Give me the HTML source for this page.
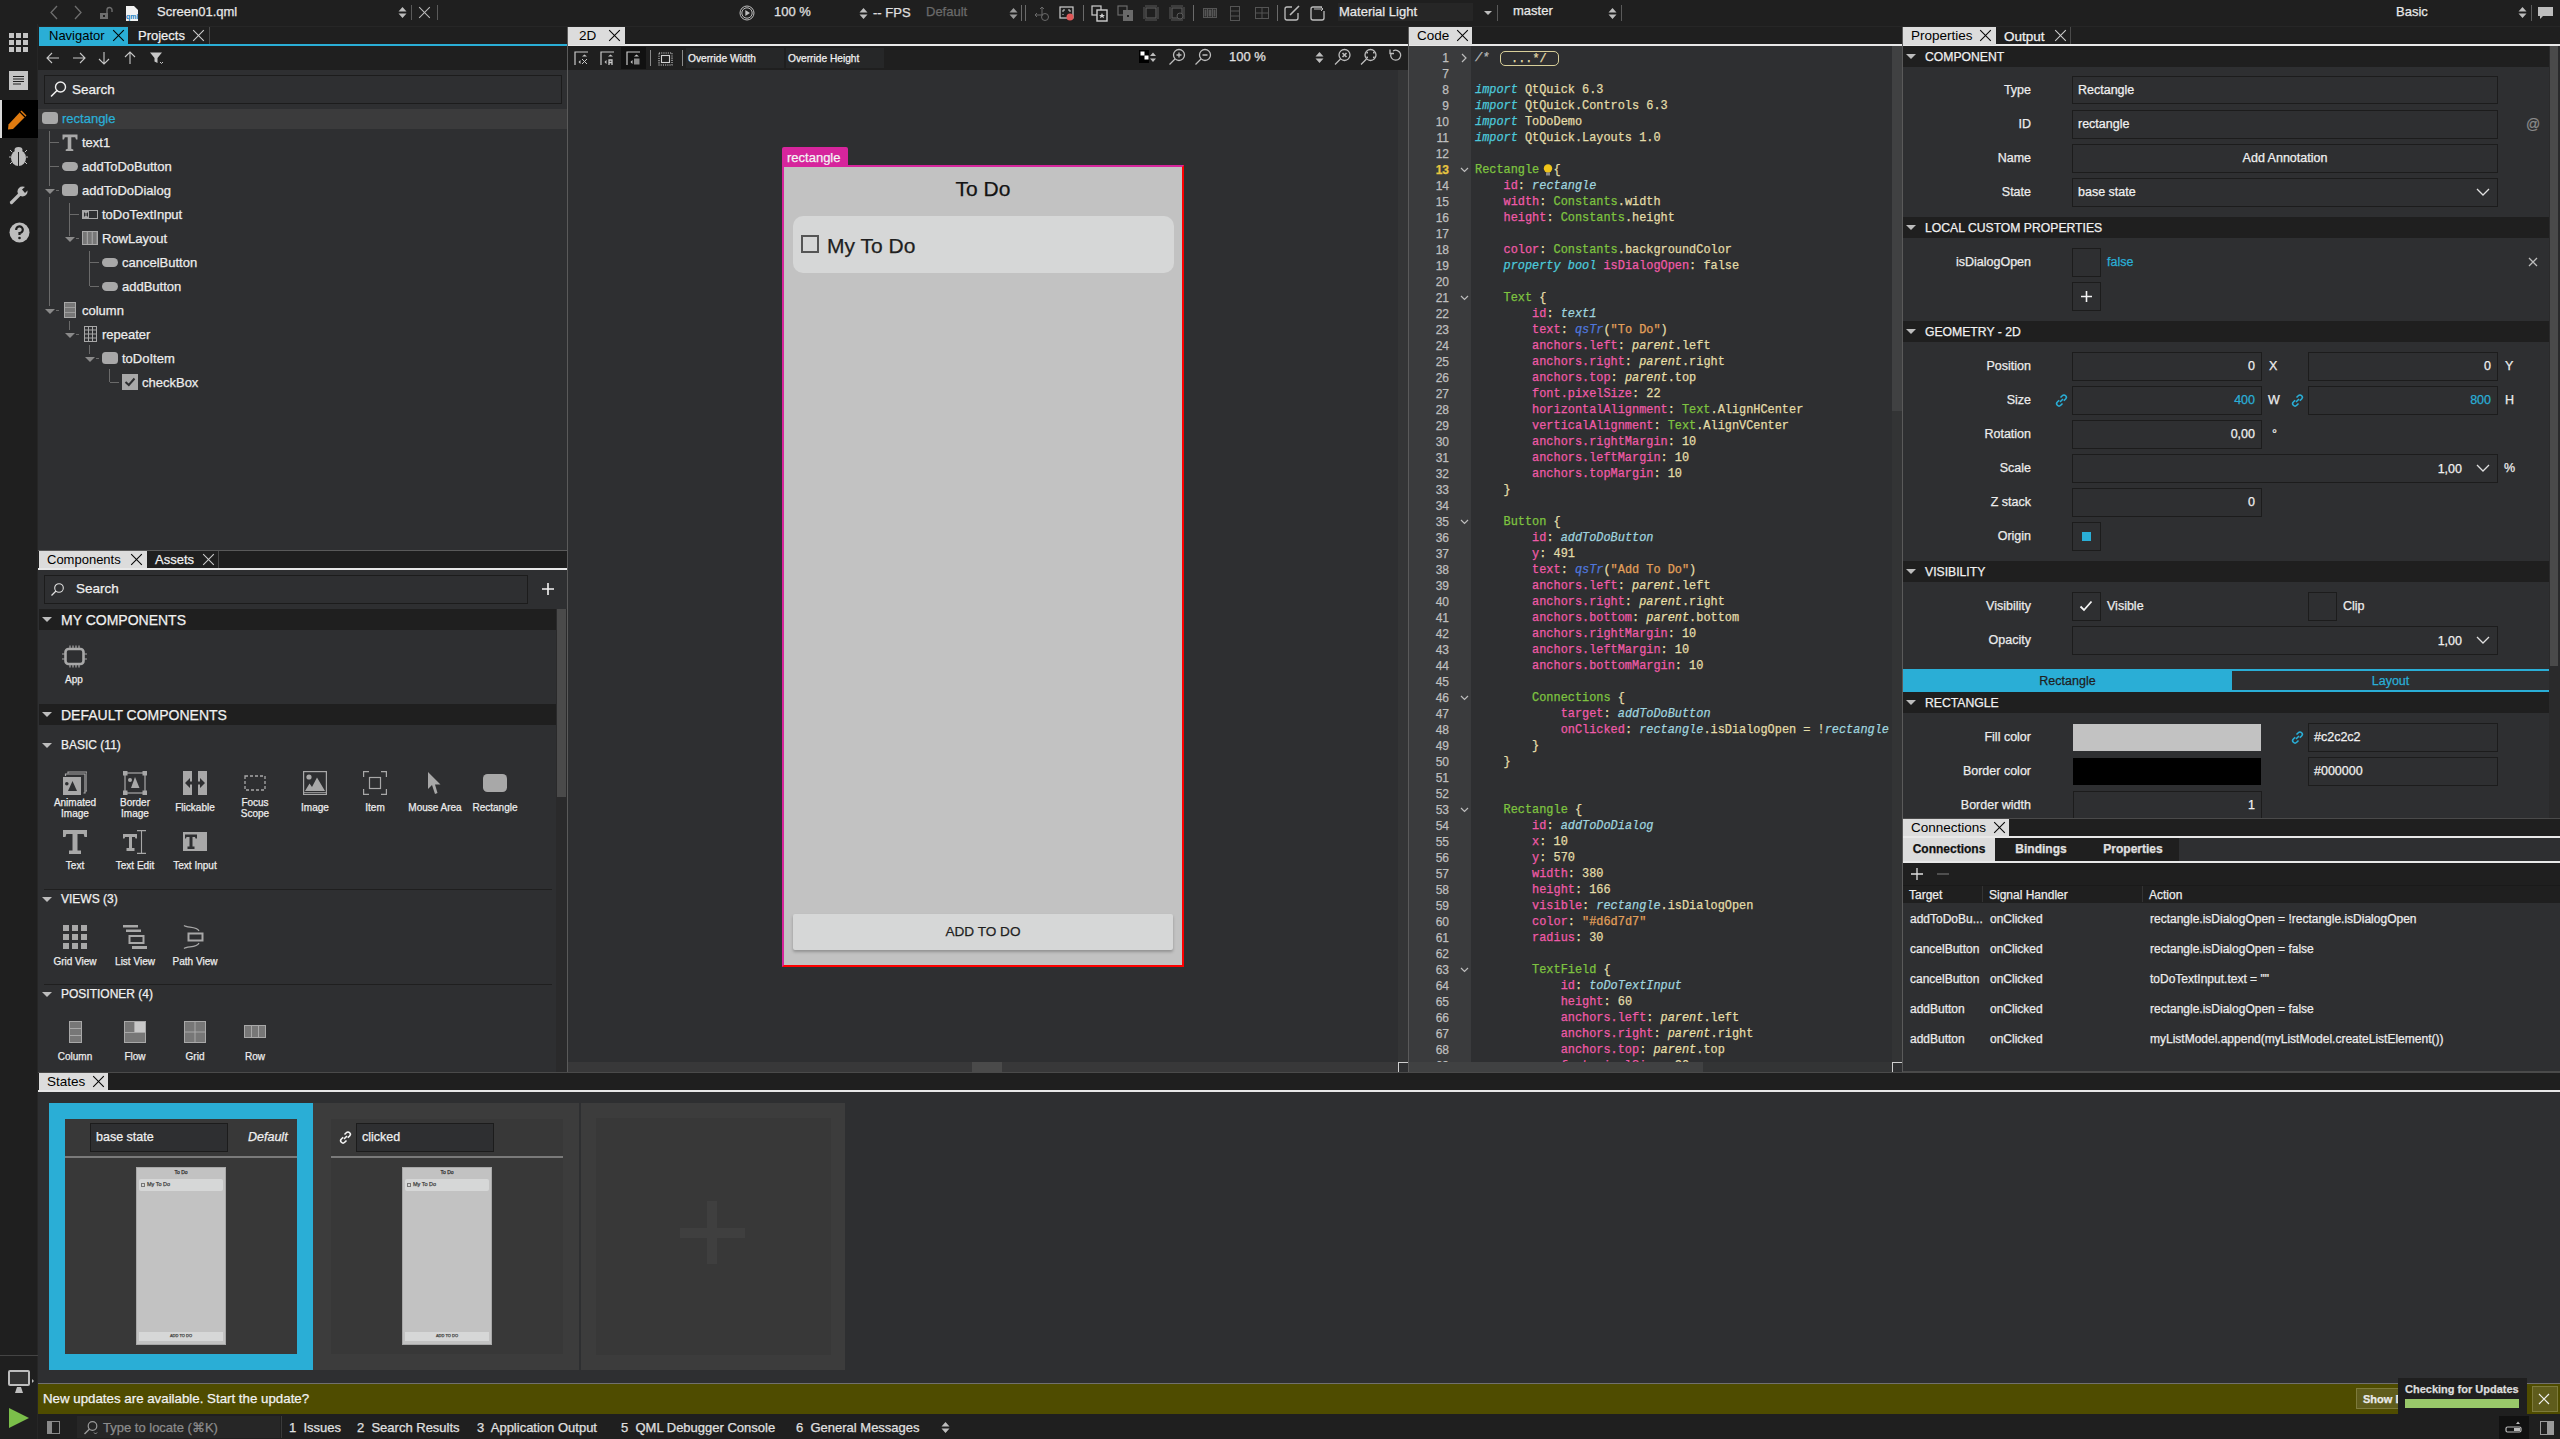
<!DOCTYPE html>
<html><head><meta charset="utf-8">
<style>
*{box-sizing:border-box;margin:0;padding:0}
html,body{width:2560px;height:1439px;overflow:hidden;background:#1f1f1f;font-family:"Liberation Sans",sans-serif;font-size:13px;color:#e6e6e6}
.a{position:absolute}
.t{position:absolute;white-space:pre;line-height:1;-webkit-text-stroke:0.25px currentColor}
.dk{background:#1f1f1f}
.pn{background:#2e2f31}
.tab{position:absolute;height:19px;font-size:13px;line-height:19px;padding-left:9px;color:#f0f0f0}
.tab.on{background:#dcdcdc;color:#000}
.tab.bl{background:#2aaed6;color:#000}
.x{position:absolute;width:11px;height:11px}
.x:before,.x:after{content:"";position:absolute;left:-2px;top:5px;width:15px;height:1px;background:currentColor;transform:rotate(45deg)}
.x:after{transform:rotate(-45deg)}
.inp{position:absolute;border:1px solid #1c1c1c;background:#2e2f31;height:28px}
.lbl{position:absolute;white-space:pre;text-align:right;width:160px;font-size:13px;line-height:14px;color:#e6e6e6}
.hdr{position:absolute;background:#1f1f1f;height:21px;font-size:13px;line-height:21px;color:#f0f0f0}
.tri{position:absolute;width:0;height:0;border-left:5px solid transparent;border-right:5px solid transparent;border-top:5px solid #bdbdbd}
.code{font-family:"Liberation Mono",monospace;font-size:11.9px}
</style></head><body>


<!-- ============ LEFT MODE BAR ============ -->
<div class="a dk" style="left:0;top:24px;width:38px;height:1415px"></div>
<div class="a" style="left:37px;top:24px;width:1px;height:1415px;background:#262626"></div>
<svg class="a" style="left:9px;top:33px" width="20" height="20" viewBox="0 0 20 20" fill="#c4c4c4"><rect x="0" y="0" width="5" height="5"/><rect x="7" y="0" width="5" height="5"/><rect x="14" y="0" width="5" height="5"/><rect x="0" y="7" width="5" height="5"/><rect x="7" y="7" width="5" height="5"/><rect x="14" y="7" width="5" height="5"/><rect x="0" y="14" width="5" height="5"/><rect x="7" y="14" width="5" height="5"/><rect x="14" y="14" width="5" height="5"/></svg>
<svg class="a" style="left:9px;top:71px" width="20" height="20" viewBox="0 0 20 20"><rect x="0" y="0" width="19" height="19" fill="#c4c4c4"/><path d="M4 5.5h11M4 8h11M4 10.5h11M4 13h8" stroke="#1f1f1f" stroke-width="1.2"/></svg>
<div class="a" style="left:0;top:100px;width:38px;height:38px;background:#000"></div>
<div class="a" style="left:0;top:100px;width:2px;height:38px;background:#d8d8d8"></div>
<svg class="a" style="left:7px;top:108px" width="22" height="22" viewBox="0 0 22 22"><path d="M14.5 2.5 L19.5 7.5 L6 21 L1 21.5 L1.5 16.5Z" fill="#e07b10"/><path d="M13 4 L18 9" stroke="#000" stroke-width="1.3"/></svg>
<svg class="a" style="left:8px;top:146px" width="21" height="21" viewBox="0 0 21 21"><ellipse cx="10.5" cy="12" rx="7.5" ry="8" fill="#bdbdbd"/><ellipse cx="10.5" cy="4" rx="4" ry="3" fill="#bdbdbd"/><path d="M10.5 6v14" stroke="#1f1f1f" stroke-width="1"/><path d="M1 11h2M18 11h2M2 4l2 2M19 4l-2 2M2 18l2-2M19 18l-2-2" stroke="#bdbdbd" stroke-width="1"/></svg>
<svg class="a" style="left:9px;top:185px" width="20" height="20" viewBox="0 0 20 20"><path d="M2.5 17.5 L11 9" stroke="#bdbdbd" stroke-width="3.2" stroke-linecap="round"/><circle cx="13.5" cy="6.5" r="5" fill="#bdbdbd"/><path d="M13 4.5 L17 1 L20 4 L16 8Z" fill="#1f1f1f"/></svg>
<svg class="a" style="left:9px;top:222px" width="21" height="21" viewBox="0 0 21 21"><circle cx="10.5" cy="10.5" r="10" fill="#bdbdbd"/><path d="M7.2 8 A3.3 3.3 0 1 1 10.5 11 V13" fill="none" stroke="#1f1f1f" stroke-width="2.2"/><circle cx="10.5" cy="16" r="1.3" fill="#1f1f1f"/></svg>
<div class="a" style="left:0;top:1355px;width:38px;height:1px;background:#444"></div>
<svg class="a" style="left:6px;top:1369px" width="30" height="25" viewBox="0 0 30 25"><rect x="2" y="1" width="22" height="16" rx="2" fill="#bdbdbd"/><rect x="4" y="3" width="18" height="12" fill="#333"/><path d="M9 24 L11 18 H15 L17 24Z" fill="#bdbdbd"/><path d="M26 10 L28 12 L26 14Z" fill="#bdbdbd"/></svg>
<svg class="a" style="left:8px;top:1407px" width="22" height="22" viewBox="0 0 22 22"><path d="M1 1 L21 11 L1 21Z" fill="#7bbf4a"/></svg>

<!-- ============ TOP BAR ============ -->
<div class="a dk" style="left:0;top:0;width:2560px;height:24px"></div>
<div class="a" style="left:38px;top:26px;width:2522px;height:1px;background:#262626"></div>
<svg class="a" style="left:48px;top:5px" width="40" height="15" viewBox="0 0 40 15"><path d="M9 1 L3 7.5 L9 14" fill="none" stroke="#6e6e6e" stroke-width="1.3"/><path d="M27 1 L33 7.5 L27 14" fill="none" stroke="#6e6e6e" stroke-width="1.3"/></svg>
<svg class="a" style="left:99px;top:6px" width="14" height="14" viewBox="0 0 14 14"><rect x="1" y="7" width="8" height="6" fill="#6e6e6e"/><rect x="4" y="9" width="2" height="2" fill="#1f1f1f"/><path d="M8 7 V4 A2.5 2.5 0 0 1 13 4 V6" fill="none" stroke="#6e6e6e" stroke-width="1.4"/></svg>
<svg class="a" style="left:125px;top:5px" width="14" height="17" viewBox="0 0 14 17"><path d="M1 1 H9 L13 5 V16 H1 Z" fill="#f2f2f2"/><text x="1" y="14" font-size="7" font-family="Liberation Sans" fill="#1a7fc2" font-weight="bold">qml</text></svg>
<div class="t" style="left:157px;top:5px;font-size:13px;color:#e8e8e8">Screen01.qml</div>
<svg class="a" style="left:398px;top:6px" width="9" height="13" viewBox="0 0 9 13"><path d="M0.5 5.5 L4.5 1 L8.5 5.5Z M0.5 7.5 L4.5 12 L8.5 7.5Z" fill="#bdbdbd"/></svg>
<div class="a" style="left:411px;top:5px;width:1px;height:15px;background:#5a5a5a"></div>
<div class="x" style="left:419px;top:7px;color:#bdbdbd"></div>
<div class="a" style="left:437px;top:5px;width:1px;height:15px;background:#5a5a5a"></div>

<svg class="a" style="left:739px;top:5px" width="16" height="16" viewBox="0 0 16 16"><circle cx="8" cy="8" r="7" fill="none" stroke="#bdbdbd" stroke-width="1"/><circle cx="8" cy="8" r="5.2" fill="none" stroke="#bdbdbd" stroke-width="1"/><path d="M6.3 5 L11 8 L6.3 11Z" fill="#bdbdbd"/></svg>
<div class="t" style="left:774px;top:5px;font-size:13px;color:#e0e0e0">100 %</div>
<svg class="a" style="left:859px;top:7px" width="9" height="13" viewBox="0 0 9 13"><path d="M0.5 5.5 L4.5 1 L8.5 5.5Z M0.5 7.5 L4.5 12 L8.5 7.5Z" fill="#bdbdbd"/></svg>
<div class="t" style="left:873px;top:6px;font-size:13px;color:#e0e0e0">-- FPS</div>
<div class="t" style="left:926px;top:5px;font-size:13px;color:#6a6a6a">Default</div>
<svg class="a" style="left:1009px;top:7px" width="9" height="13" viewBox="0 0 9 13"><path d="M0.5 5.5 L4.5 1 L8.5 5.5Z M0.5 7.5 L4.5 12 L8.5 7.5Z" fill="#9a9a9a"/></svg>
<div class="a" style="left:1021px;top:5px;width:1px;height:16px;background:#6a6a6a"></div>
<div class="a" style="left:1025px;top:5px;width:1px;height:16px;background:#6a6a6a"></div>
<svg class="a" style="left:1034px;top:6px" width="16" height="15" viewBox="0 0 16 15"><path d="M8 1 V9 M1 9 H9 M6 3 L8 1 L10 3 M3 7 L1 9 L3 11" fill="none" stroke="#6a6a6a" stroke-width="1"/><circle cx="11" cy="11" r="3.5" fill="none" stroke="#6a6a6a"/></svg>
<svg class="a" style="left:1059px;top:6px" width="16" height="15" viewBox="0 0 16 15"><rect x="1" y="1" width="13" height="11" fill="none" stroke="#d0d0d0" stroke-width="1.2"/><path d="M4 4h2M4 4v2M11 4h-2M11 4v2M4 9v-1M11 9v-1" stroke="#d0d0d0"/><circle cx="11" cy="11" r="3.5" fill="#e05858"/></svg>
<div class="a" style="left:1083px;top:5px;width:1px;height:16px;background:#6a6a6a"></div>
<svg class="a" style="left:1091px;top:5px" width="17" height="17" viewBox="0 0 17 17"><rect x="1" y="1" width="9" height="9" fill="none" stroke="#cfcfcf" stroke-width="1.2"/><rect x="6" y="5" width="10" height="11" fill="#1f1f1f" stroke="#cfcfcf" stroke-width="1.4"/><path d="M11 8 l1 2 h2 l-1.6 1.2 l.6 2 l-2-1.2 l-2 1.2 l.6-2 L8 10 h2z" fill="#cfcfcf"/></svg>
<svg class="a" style="left:1117px;top:5px" width="17" height="17" viewBox="0 0 17 17"><rect x="1" y="1" width="9" height="9" fill="none" stroke="#6a6a6a" stroke-width="1.2"/><rect x="6" y="5" width="10" height="11" fill="#6a6a6a"/><rect x="10" y="10" width="2" height="2" fill="#1f1f1f"/></svg>
<svg class="a" style="left:1143px;top:5px" width="16" height="16" viewBox="0 0 16 16"><rect x="3" y="3" width="10" height="10" fill="none" stroke="#5a5a5a" stroke-width="1.2"/><path d="M1 2v12M15 2v12M2 1h12M2 15h12" stroke="#5a5a5a"/></svg>
<svg class="a" style="left:1169px;top:5px" width="16" height="16" viewBox="0 0 16 16"><rect x="3" y="3" width="10" height="10" fill="none" stroke="#5a5a5a" stroke-width="1.2"/><path d="M1 2v12M15 2v12M2 1h12M2 15h12" stroke="#5a5a5a"/><circle cx="11" cy="11" r="3" fill="#1f1f1f" stroke="#5a5a5a"/></svg>
<div class="a" style="left:1193px;top:5px;width:1px;height:16px;background:#6a6a6a"></div>
<svg class="a" style="left:1203px;top:8px" width="14" height="10" viewBox="0 0 14 10"><rect x="0.5" y="0.5" width="13" height="9" fill="none" stroke="#555"/><path d="M4.5 1v8M9.5 1v8" stroke="#555"/><rect x="1.5" y="1.5" width="2" height="7" fill="#555"/><rect x="5.5" y="1.5" width="3" height="7" fill="#555"/><rect x="10.5" y="1.5" width="2" height="7" fill="#555"/></svg>
<svg class="a" style="left:1230px;top:6px" width="10" height="15" viewBox="0 0 10 15"><rect x="0.5" y="0.5" width="9" height="14" fill="none" stroke="#555"/><path d="M1 5h8M1 10h8" stroke="#555"/></svg>
<svg class="a" style="left:1255px;top:7px" width="14" height="12" viewBox="0 0 14 12"><rect x="0.5" y="0.5" width="13" height="11" fill="none" stroke="#555"/><path d="M7 1v10M1 6h12" stroke="#555"/></svg>
<div class="a" style="left:1277px;top:5px;width:1px;height:16px;background:#6a6a6a"></div>
<svg class="a" style="left:1284px;top:5px" width="17" height="16" viewBox="0 0 17 16"><path d="M8 2 H3 A2 2 0 0 0 1 4 V13 A2 2 0 0 0 3 15 H12 A2 2 0 0 0 14 13 V8" fill="none" stroke="#bdbdbd" stroke-width="1.3"/><path d="M6 10 L15 1" stroke="#bdbdbd" stroke-width="1.6"/></svg>
<svg class="a" style="left:1310px;top:5px" width="16" height="16" viewBox="0 0 16 16"><path d="M12 2 H3 A2 2 0 0 0 1 4 V13 A2 2 0 0 0 3 15 H12 A2 2 0 0 0 14 13 V6" fill="none" stroke="#bdbdbd" stroke-width="1.3"/><path d="M4 4 H13 M11 2 L13 4 L11 6" fill="none" stroke="#bdbdbd"/></svg>
<div class="a" style="left:1338px;top:3px;width:135px;height:18px;background:#262626"></div>
<div class="t" style="left:1339px;top:5px;font-size:13px;color:#e8e8e8">Material Light</div>
<svg class="a" style="left:1483px;top:10px" width="10" height="6" viewBox="0 0 10 6"><path d="M1 1 L5 5 L9 1Z" fill="#bdbdbd"/></svg>
<div class="a" style="left:1497px;top:5px;width:1px;height:16px;background:#5a5a5a"></div>
<div class="t" style="left:1513px;top:4px;font-size:13px;color:#e8e8e8">master</div>
<svg class="a" style="left:1608px;top:7px" width="9" height="13" viewBox="0 0 9 13"><path d="M0.5 5.5 L4.5 1 L8.5 5.5Z M0.5 7.5 L4.5 12 L8.5 7.5Z" fill="#bdbdbd"/></svg>
<div class="a" style="left:1621px;top:5px;width:1px;height:16px;background:#5a5a5a"></div>
<div class="t" style="left:2396px;top:5px;font-size:13px;color:#e8e8e8">Basic</div>
<svg class="a" style="left:2518px;top:6px" width="9" height="13" viewBox="0 0 9 13"><path d="M0.5 5.5 L4.5 1 L8.5 5.5Z M0.5 7.5 L4.5 12 L8.5 7.5Z" fill="#bdbdbd"/></svg>
<div class="a" style="left:2531px;top:5px;width:1px;height:16px;background:#5a5a5a"></div>
<svg class="a" style="left:2537px;top:6px" width="17" height="14" viewBox="0 0 17 14"><path d="M1 1 H16 V10 H6 L3 13 V10 H1Z" fill="#bdbdbd"/></svg>

<!-- ============ NAVIGATOR PANEL ============ -->
<div class="a dk" style="left:38px;top:27px;width:529px;height:43px"></div>
<div class="a" style="left:39px;top:44px;width:528px;height:2px;background:#2aaed6"></div>
<div class="tab bl" style="left:39px;top:27px;width:89px;height:18px;line-height:17px;padding-left:10px">Navigator</div>
<div class="x" style="left:113px;top:30px;color:#000"></div>
<div class="t" style="left:138px;top:29px;color:#f0f0f0">Projects</div>
<div class="x" style="left:193px;top:30px;color:#d0d0d0"></div>
<div class="a" style="left:209px;top:27px;width:1px;height:17px;background:#4a4a4a"></div>
<svg class="a" style="left:46px;top:51px" width="120" height="14" viewBox="0 0 120 14" fill="none" stroke="#c8c8c8" stroke-width="1.1"><path d="M1 7h12M6 2L1 7l5 5"/><path d="M27 7h12M34 2l5 5-5 5"/><path d="M58 1v12M53 8l5 5 5-5"/><path d="M84 1v12M79 6l5-5 5 5"/><path d="M104 1.5h12l-4.5 5.5v5l-3-1.5v-3.5z" fill="#c8c8c8" stroke="none"/><path d="M114 11l1.5 1.5 1.5-1.5" stroke-width="1"/></svg>
<div class="a pn" style="left:38px;top:70px;width:529px;height:480px"></div>
<div class="inp" style="left:44px;top:75px;width:518px;height:29px"></div>
<svg class="a" style="left:50px;top:80px" width="18" height="18" viewBox="0 0 18 18"><circle cx="10.5" cy="7" r="5" fill="none" stroke="#f0f0f0" stroke-width="1.4"/><path d="M7 10.5 L1.5 16" stroke="#f0f0f0" stroke-width="1.6" stroke-linecap="round"/></svg>
<div class="t" style="left:72px;top:83px;font-size:13.5px;color:#f0f0f0">Search</div>
<div class="a" style="left:38px;top:109px;width:529px;height:20px;background:#3b3b3c"></div>
<div class="a" style="left:49px;top:131px;width:1px;height:55px;background:#6a6a6a"></div>
<div class="a" style="left:50px;top:142px;width:9px;height:1px;background:#6a6a6a"></div>
<div class="a" style="left:50px;top:166px;width:9px;height:1px;background:#6a6a6a"></div>
<div class="tri" style="left:45px;top:189px;border-top-color:#8a8a8a"></div>
<div class="a" style="left:56px;top:190px;width:3px;height:1px;background:#6a6a6a"></div>
<div class="a" style="left:49px;top:197px;width:1px;height:109px;background:#6a6a6a"></div>
<div class="tri" style="left:45px;top:309px;border-top-color:#8a8a8a"></div>
<div class="a" style="left:56px;top:310px;width:3px;height:1px;background:#6a6a6a"></div>
<div class="a" style="left:69px;top:203px;width:1px;height:33px;background:#6a6a6a"></div>
<div class="a" style="left:70px;top:214px;width:9px;height:1px;background:#6a6a6a"></div>
<div class="tri" style="left:65px;top:237px;border-top-color:#8a8a8a"></div>
<div class="a" style="left:76px;top:238px;width:3px;height:1px;background:#6a6a6a"></div>
<div class="a" style="left:89px;top:251px;width:1px;height:35px;background:#6a6a6a"></div>
<div class="a" style="left:90px;top:262px;width:9px;height:1px;background:#6a6a6a"></div>
<div class="a" style="left:90px;top:286px;width:9px;height:1px;background:#6a6a6a"></div>
<div class="a" style="left:69px;top:321px;width:1px;height:9px;background:#6a6a6a"></div>
<div class="tri" style="left:65px;top:333px;border-top-color:#8a8a8a"></div>
<div class="a" style="left:76px;top:334px;width:3px;height:1px;background:#6a6a6a"></div>
<div class="a" style="left:89px;top:345px;width:1px;height:9px;background:#6a6a6a"></div>
<div class="tri" style="left:85px;top:357px;border-top-color:#8a8a8a"></div>
<div class="a" style="left:96px;top:358px;width:3px;height:1px;background:#6a6a6a"></div>
<div class="a" style="left:109px;top:369px;width:1px;height:13px;background:#6a6a6a"></div>
<div class="a" style="left:110px;top:382px;width:9px;height:1px;background:#6a6a6a"></div>
<div class="a" style="left:42px;top:112px;width:16px;height:12px;line-height:0"><svg width="16" height="12" viewBox="0 0 16 12"><rect x="0" y="0" width="16" height="12" rx="3.5" fill="#a8a8a8"/></svg></div>
<div class="t" style="left:62px;top:112px;font-size:13px;color:#2aaed6">rectangle</div>
<div class="a" style="left:62px;top:134px;width:16px;height:17px;line-height:0"><svg width="16" height="17" viewBox="0 0 16 17"><path d="M0.5 0.5h15v5h-1.5l-.8-2.3h-3.9v11.6l2 .6v1.6h-7.6v-1.6l2-.6V3.2H2.8L2 5.5H.5z" fill="#a8a8a8"/></svg></div>
<div class="t" style="left:82px;top:136px;font-size:13px;color:#ececec">text1</div>
<div class="a" style="left:62px;top:162px;width:16px;height:9px;line-height:0"><svg width="16" height="9" viewBox="0 0 16 9"><rect x="0" y="0" width="16" height="9" rx="4.5" fill="#a8a8a8"/></svg></div>
<div class="t" style="left:82px;top:160px;font-size:13px;color:#ececec">addToDoButton</div>
<div class="a" style="left:62px;top:184px;width:16px;height:12px;line-height:0"><svg width="16" height="12" viewBox="0 0 16 12"><rect x="0" y="0" width="16" height="12" rx="3.5" fill="#a8a8a8"/></svg></div>
<div class="t" style="left:82px;top:184px;font-size:13px;color:#ececec">addToDoDialog</div>
<div class="a" style="left:82px;top:210px;width:16px;height:9px;line-height:0"><svg width="16" height="9" viewBox="0 0 16 9"><rect x="0.5" y="0.5" width="15" height="8" fill="none" stroke="#a8a8a8"/><path d="M2.5 2.5h3M2.5 6.5h3M4 2.5v4" stroke="#a8a8a8"/><rect x="1.5" y="1.5" width="5" height="6" fill="none" stroke="#a8a8a8"/></svg></div>
<div class="t" style="left:102px;top:208px;font-size:13px;color:#ececec">toDoTextInput</div>
<div class="a" style="left:82px;top:231px;width:16px;height:14px;line-height:0"><svg width="16" height="14" viewBox="0 0 16 14"><rect x="0" y="0" width="16" height="14" fill="#a8a8a8"/><path d="M1 1h3.8v12H1zM5.9 1h3.8v12H5.9zM10.8 1h3.8v12h-3.8z" fill="#777"/></svg></div>
<div class="t" style="left:102px;top:232px;font-size:13px;color:#ececec">RowLayout</div>
<div class="a" style="left:102px;top:258px;width:16px;height:9px;line-height:0"><svg width="16" height="9" viewBox="0 0 16 9"><rect x="0" y="0" width="16" height="9" rx="4.5" fill="#a8a8a8"/></svg></div>
<div class="t" style="left:122px;top:256px;font-size:13px;color:#ececec">cancelButton</div>
<div class="a" style="left:102px;top:282px;width:16px;height:9px;line-height:0"><svg width="16" height="9" viewBox="0 0 16 9"><rect x="0" y="0" width="16" height="9" rx="4.5" fill="#a8a8a8"/></svg></div>
<div class="t" style="left:122px;top:280px;font-size:13px;color:#ececec">addButton</div>
<div class="a" style="left:64px;top:302px;width:12px;height:16px;line-height:0"><svg width="12" height="16" viewBox="0 0 12 16"><rect x="0" y="0" width="12" height="16" fill="#a8a8a8"/><path d="M1 1h10v4.2H1zM1 6h10v4H1zM1 10.8h10v4.2H1z" fill="#777"/></svg></div>
<div class="t" style="left:82px;top:304px;font-size:13px;color:#ececec">column</div>
<div class="a" style="left:84px;top:326px;width:13px;height:16px;line-height:0"><svg width="13" height="16" viewBox="0 0 13 16"><rect x="0.5" y="0.5" width="12" height="15" fill="none" stroke="#a8a8a8"/><path d="M4.5 1v14M8.5 1v14M1 4h11M1 8h11M1 12h11" stroke="#a8a8a8"/></svg></div>
<div class="t" style="left:102px;top:328px;font-size:13px;color:#ececec">repeater</div>
<div class="a" style="left:102px;top:352px;width:16px;height:12px;line-height:0"><svg width="16" height="12" viewBox="0 0 16 12"><rect x="0" y="0" width="16" height="12" rx="3.5" fill="#a8a8a8"/></svg></div>
<div class="t" style="left:122px;top:352px;font-size:13px;color:#ececec">toDoItem</div>
<div class="a" style="left:122px;top:374px;width:16px;height:16px;line-height:0"><svg width="16" height="16" viewBox="0 0 16 16"><rect x="0" y="0" width="16" height="16" fill="#a8a8a8"/><path d="M3.5 8 L6.8 11 L12.5 4.5" fill="none" stroke="#2e2f31" stroke-width="2"/></svg></div>
<div class="t" style="left:142px;top:376px;font-size:13px;color:#ececec">checkBox</div>
<!-- ============ COMPONENTS PANEL ============ -->
<div class="a pn" style="left:38px;top:550px;width:529px;height:522px"></div>
<div class="a" style="left:38px;top:550px;width:529px;height:1px;background:#5a5a5a"></div>
<div class="a dk" style="left:38px;top:551px;width:529px;height:17px"></div>
<div class="a" style="left:38px;top:568px;width:529px;height:2px;background:#e8e8e8"></div>
<div class="tab on" style="left:39px;top:551px;width:108px;height:17px;line-height:17px;padding-left:8px">Components</div>
<div class="x" style="left:131px;top:554px;color:#000"></div>
<div class="t" style="left:155px;top:553px;color:#f0f0f0">Assets</div>
<div class="x" style="left:203px;top:554px;color:#d0d0d0"></div>
<div class="a" style="left:218px;top:551px;width:1px;height:17px;background:#4a4a4a"></div>
<div class="inp" style="left:44px;top:575px;width:484px;height:29px"></div>
<svg class="a" style="left:50px;top:582px" width="15" height="15" viewBox="0 0 15 15"><circle cx="9" cy="6" r="4.3" fill="none" stroke="#e0e0e0" stroke-width="1.1"/><path d="M6 9 L1.5 13.5" stroke="#e0e0e0" stroke-width="1.2"/></svg>
<div class="t" style="left:76px;top:582px;font-size:13.5px;color:#f0f0f0">Search</div>
<svg class="a" style="left:542px;top:583px" width="12" height="12" viewBox="0 0 12 12"><path d="M6 0v12M0 6h12" stroke="#f4f4f4" stroke-width="1.6"/></svg>
<div class="a" style="left:556px;top:609px;width:11px;height:463px;background:#2a2a2b"></div>
<div class="a" style="left:557px;top:609px;width:9px;height:188px;background:#4a4a4a"></div>
<div class="hdr" style="left:39px;top:609px;width:517px"></div>
<div class="tri" style="left:42px;top:617px"></div>
<div class="t" style="left:61px;top:613px;font-size:14px;color:#f0f0f0">MY COMPONENTS</div>
<svg class="a" style="left:62px;top:645px" width="25" height="23" viewBox="0 0 25 23"><rect x="3.5" y="4" width="18" height="15" rx="3" fill="none" stroke="#a8a8a8" stroke-width="2.6"/><path d="M8 0.5v3M11 0.5v3M14 0.5v3M17 0.5v3M8 19.5v3M11 19.5v3M14 19.5v3M17 19.5v3M0 9h3M0 14h3M22 9h3M22 14h3" stroke="#a8a8a8" stroke-width="1.2"/></svg>
<div class="t" style="left:65px;top:675px;font-size:10px;color:#ececec">App</div>
<div class="hdr" style="left:39px;top:704px;width:517px"></div>
<div class="tri" style="left:42px;top:712px"></div>
<div class="t" style="left:61px;top:708px;font-size:14px;color:#f0f0f0">DEFAULT COMPONENTS</div>
<div class="tri" style="left:42px;top:743px"></div>
<div class="t" style="left:61px;top:739px;font-size:12px;color:#f0f0f0">BASIC (11)</div>
<div class="a" style="left:44px;top:889px;width:508px;height:1px;background:#1f1f1f"></div>
<div class="tri" style="left:42px;top:897px"></div>
<div class="t" style="left:61px;top:893px;font-size:12px;color:#f0f0f0">VIEWS (3)</div>
<div class="a" style="left:44px;top:984px;width:508px;height:1px;background:#1f1f1f"></div>
<div class="tri" style="left:42px;top:992px"></div>
<div class="t" style="left:61px;top:988px;font-size:12px;color:#f0f0f0">POSITIONER (4)</div>
<div class="a" style="left:63px;top:771px;width:24px;height:24px;line-height:0"><svg width="24" height="24" viewBox="0 0 24 24"><path d="M5 2.5 V1 H24 V20 H22.5" fill="none" stroke="#a8a8a8" stroke-width="1.2"/><path d="M2.5 5 V3 H22 V22 H20.5" fill="none" stroke="#a8a8a8" stroke-width="1.2"/><rect x="0" y="6" width="18" height="18" fill="#a8a8a8"/><path d="M5 20 L9.5 10 L14 20Z" fill="#2e2f31"/><circle cx="3.8" cy="12.8" r="1.8" fill="#2e2f31"/></svg></div>
<div class="t" style="left:35px;top:797px;width:80px;text-align:center;font-size:10px;line-height:11px;color:#ececec">Animated<br>Image</div>
<div class="a" style="left:123px;top:771px;width:24px;height:24px;line-height:0"><svg width="24" height="24" viewBox="0 0 24 24"><rect x="2" y="2" width="20" height="20" fill="none" stroke="#a8a8a8" stroke-width="1.2"/><rect x="0" y="0" width="4.5" height="4.5" fill="#a8a8a8"/><rect x="19.5" y="0" width="4.5" height="4.5" fill="#a8a8a8"/><rect x="0" y="19.5" width="4.5" height="4.5" fill="#a8a8a8"/><rect x="19.5" y="19.5" width="4.5" height="4.5" fill="#a8a8a8"/><path d="M8 17 L12 6 L16.5 17Z" fill="#a8a8a8"/><circle cx="7" cy="9" r="2" fill="#a8a8a8"/></svg></div>
<div class="t" style="left:95px;top:797px;width:80px;text-align:center;font-size:10px;line-height:11px;color:#ececec">Border<br>Image</div>
<div class="a" style="left:183px;top:771px;width:24px;height:24px;line-height:0"><svg width="24" height="24" viewBox="0 0 24 24"><rect x="0" y="0" width="9" height="24" fill="#a8a8a8"/><rect x="15" y="0" width="9" height="24" fill="#a8a8a8"/><path d="M2 12 L7 7 V10.5 H11 V13.5 H7 V17Z M22 12 L17 7 V10.5 H13 V13.5 H17 V17Z" fill="#2e2f31"/></svg></div>
<div class="t" style="left:155px;top:802px;width:80px;text-align:center;font-size:10px;line-height:11px;color:#ececec">Flickable</div>
<div class="a" style="left:243px;top:771px;width:24px;height:24px;line-height:0"><svg width="24" height="24" viewBox="0 0 24 24"><rect x="2" y="5" width="20" height="14" fill="none" stroke="#a8a8a8" stroke-width="1.3" stroke-dasharray="3 2"/></svg></div>
<div class="t" style="left:215px;top:797px;width:80px;text-align:center;font-size:10px;line-height:11px;color:#ececec">Focus<br>Scope</div>
<div class="a" style="left:303px;top:771px;width:24px;height:24px;line-height:0"><svg width="24" height="24" viewBox="0 0 24 24"><rect x="0.6" y="0.6" width="22.8" height="22.8" fill="none" stroke="#a8a8a8" stroke-width="1.2"/><path d="M2 20 L6.5 12.5 L9 16 L14 6.5 L22 20Z" fill="#a8a8a8"/><circle cx="6" cy="6" r="2.6" fill="#a8a8a8"/><path d="M1 21.5h22" stroke="#a8a8a8" stroke-width="0.8"/></svg></div>
<div class="t" style="left:275px;top:802px;width:80px;text-align:center;font-size:10px;line-height:11px;color:#ececec">Image</div>
<div class="a" style="left:363px;top:771px;width:24px;height:24px;line-height:0"><svg width="24" height="24" viewBox="0 0 24 24" fill="none" stroke="#a8a8a8" stroke-width="1.2"><path d="M0.6 6V0.6H6M18 0.6h5.4V6M23.4 18v5.4H18M6 23.4H0.6V18"/><rect x="6.5" y="6.5" width="11" height="11"/></svg></div>
<div class="t" style="left:335px;top:802px;width:80px;text-align:center;font-size:10px;line-height:11px;color:#ececec">Item</div>
<div class="a" style="left:427px;top:771px;width:14px;height:24px;line-height:0"><svg width="14" height="24" viewBox="0 0 14 24"><path d="M1 1 L1 18 L5 14 L8 23 L10.5 22 L8 13.5 L13.5 13.5Z" fill="#a8a8a8"/></svg></div>
<div class="t" style="left:395px;top:802px;width:80px;text-align:center;font-size:10px;line-height:11px;color:#ececec">Mouse Area</div>
<div class="a" style="left:483px;top:774px;width:24px;height:18px;line-height:0"><svg width="24" height="18" viewBox="0 0 24 18"><rect x="0" y="0" width="24" height="18" rx="4.5" fill="#a8a8a8"/></svg></div>
<div class="t" style="left:455px;top:802px;width:80px;text-align:center;font-size:10px;line-height:11px;color:#ececec">Rectangle</div>
<div class="a" style="left:63px;top:830px;width:24px;height:24px;line-height:0"><svg width="24" height="24" viewBox="0 0 24 24"><path d="M0 0h24v7h-2.5l-.8-3h-6.2v16.5h3.5V24h-12v-3.5h3.5V4H3.3l-.8 3H0z" fill="#a8a8a8"/></svg></div>
<div class="t" style="left:35px;top:860px;width:80px;text-align:center;font-size:10px;line-height:11px;color:#ececec">Text</div>
<div class="a" style="left:123px;top:830px;width:24px;height:24px;line-height:0"><svg width="24" height="24" viewBox="0 0 24 24"><path d="M0 4h14v4.5h-1.5l-.6-1.5H9v11h2.5V21h-8v-3H6V7H2.1l-.6 1.5H0z" fill="#a8a8a8"/><path d="M14 0.6h9M14 23.4h9M18.5 1v22" stroke="#a8a8a8" stroke-width="1.1"/></svg></div>
<div class="t" style="left:95px;top:860px;width:80px;text-align:center;font-size:10px;line-height:11px;color:#ececec">Text Edit</div>
<div class="a" style="left:183px;top:832px;width:24px;height:19px;line-height:0"><svg width="24" height="19" viewBox="0 0 24 19"><rect x="0" y="0" width="24" height="19" fill="#a8a8a8"/><path d="M2 2.5h12v4h-1.5l-.5-1.5H9.5v9.5h2V17h-7v-2.5h2V5H3.5l-.5 1.5H2z" fill="#2e2f31"/></svg></div>
<div class="t" style="left:155px;top:860px;width:80px;text-align:center;font-size:10px;line-height:11px;color:#ececec">Text Input</div>
<div class="a" style="left:63px;top:925px;width:24px;height:24px;line-height:0"><svg width="24" height="24" viewBox="0 0 24 24" fill="#a8a8a8"><rect x="0" y="0" width="6" height="6"/><rect x="9" y="0" width="6" height="6"/><rect x="18" y="0" width="6" height="6"/><rect x="0" y="9" width="6" height="6"/><rect x="9" y="9" width="6" height="6"/><rect x="18" y="9" width="6" height="6"/><rect x="0" y="18" width="6" height="6"/><rect x="9" y="18" width="6" height="6"/><rect x="18" y="18" width="6" height="6"/></svg></div>
<div class="t" style="left:35px;top:956px;width:80px;text-align:center;font-size:10px;line-height:11px;color:#ececec">Grid View</div>
<div class="a" style="left:123px;top:925px;width:24px;height:24px;line-height:0"><svg width="24" height="24" viewBox="0 0 24 24"><rect x="0" y="0" width="15" height="2.5" fill="#a8a8a8"/><rect x="3" y="4.5" width="15" height="2.5" fill="#a8a8a8"/><rect x="6.5" y="11" width="14" height="7" fill="none" stroke="#a8a8a8" stroke-width="2"/><rect x="9" y="21" width="15" height="3" fill="#a8a8a8"/></svg></div>
<div class="t" style="left:95px;top:956px;width:80px;text-align:center;font-size:10px;line-height:11px;color:#ececec">List View</div>
<div class="a" style="left:183px;top:925px;width:24px;height:24px;line-height:0"><svg width="24" height="24" viewBox="0 0 24 24"><path d="M1 0.5 C4 3 14 1 16 6 M1 23.5 C4 21 14 23 16 18" fill="none" stroke="#a8a8a8" stroke-width="1.2"/><rect x="5.5" y="8.5" width="14" height="7" fill="none" stroke="#a8a8a8" stroke-width="2"/></svg></div>
<div class="t" style="left:155px;top:956px;width:80px;text-align:center;font-size:10px;line-height:11px;color:#ececec">Path View</div>
<div class="a" style="left:69px;top:1021px;width:13px;height:22px;line-height:0"><svg width="13" height="22" viewBox="0 0 13 22"><rect x="0" y="0" width="13" height="22" fill="#a8a8a8"/><path d="M1 1h11v6H1zM1 8h11v6H1zM1 15h11v6H1z" fill="#777"/></svg></div>
<div class="t" style="left:35px;top:1051px;width:80px;text-align:center;font-size:10px;line-height:11px;color:#ececec">Column</div>
<div class="a" style="left:124px;top:1021px;width:22px;height:22px;line-height:0"><svg width="22" height="22" viewBox="0 0 22 22"><rect x="0" y="0" width="22" height="22" fill="#a8a8a8"/><rect x="1" y="1" width="9" height="10" fill="#777"/><rect x="11" y="1" width="10" height="10" fill="#c8c8c8"/><rect x="1" y="12" width="20" height="9" fill="#777"/></svg></div>
<div class="t" style="left:95px;top:1051px;width:80px;text-align:center;font-size:10px;line-height:11px;color:#ececec">Flow</div>
<div class="a" style="left:184px;top:1021px;width:22px;height:22px;line-height:0"><svg width="22" height="22" viewBox="0 0 22 22"><rect x="0" y="0" width="22" height="22" fill="#a8a8a8"/><path d="M1 1h9.5v9.5H1zM11.5 1H21v9.5h-9.5zM1 11.5h9.5V21H1zM11.5 11.5H21V21h-9.5z" fill="#777"/></svg></div>
<div class="t" style="left:155px;top:1051px;width:80px;text-align:center;font-size:10px;line-height:11px;color:#ececec">Grid</div>
<div class="a" style="left:244px;top:1025px;width:22px;height:13px;line-height:0"><svg width="22" height="13" viewBox="0 0 22 13"><rect x="0" y="0" width="22" height="13" fill="#a8a8a8"/><path d="M1 1h6v11H1zM8 1h6v11H8zM15 1h6v11h-6z" fill="#777"/></svg></div>
<div class="t" style="left:215px;top:1051px;width:80px;text-align:center;font-size:10px;line-height:11px;color:#ececec">Row</div>

<!-- ============ 2D VIEW ============ -->
<div class="a dk" style="left:568px;top:27px;width:841px;height:43px"></div>
<div class="a" style="left:567px;top:27px;width:1px;height:1045px;background:#5a5a5a"></div>
<div class="a" style="left:568px;top:44px;width:841px;height:2px;background:#e8e8e8"></div>
<div class="tab on" style="left:568px;top:27px;width:57px;height:18px;line-height:18px;padding-left:11px;font-size:13.5px">2D</div>
<div class="x" style="left:609px;top:30px;color:#000"></div>
<svg class="a" style="left:574px;top:51px" width="70" height="15" viewBox="0 0 70 15" fill="none" stroke="#c8c8c8" stroke-width="1.2"><path d="M1 14V1h13M27 14V1h13M53 14V1h13"/><path d="M8 5.5l2.5-2 2.5 2z M34 5.5l2.5-2 2.5 2z M60 5.5l2.5-2 2.5 2z" fill="#c8c8c8" stroke="none"/><path d="M4.5 11l2-2v4z M30.5 11l2-2v4z M56.5 11l2-2v4z" fill="#c8c8c8" stroke="none"/><path d="M8 8l5 5M13 8l-5 5" stroke-width="1"/><path d="M35 14V9h3v5M35 11.5h3" stroke-width="1.3"/><rect x="60" y="7.5" width="5.5" height="6" fill="#8a8a8a" stroke="none"/></svg>
<div class="a" style="left:621px;top:47px;width:25px;height:22px;background:#111"></div>
<svg class="a" style="left:626px;top:51px" width="16" height="15" viewBox="0 0 16 15" fill="none" stroke="#c8c8c8" stroke-width="1.2"><path d="M1 14V1h13"/><path d="M8 5.5l2.5-2 2.5 2z" fill="#c8c8c8" stroke="none"/><path d="M4.5 11l2-2v4z" fill="#c8c8c8" stroke="none"/><rect x="8" y="7.5" width="5.5" height="6" fill="#8a8a8a" stroke="none"/></svg>
<div class="a" style="left:650px;top:50px;width:1px;height:16px;background:#8a8a8a"></div>
<svg class="a" style="left:658px;top:52px" width="15" height="14" viewBox="0 0 15 14"><rect x="1" y="1" width="13" height="12" fill="none" stroke="#d0d0d0" stroke-width="1.1" stroke-dasharray="1.1 1.1"/><rect x="3.5" y="3.5" width="8" height="7" fill="none" stroke="#d0d0d0" stroke-width="1.1"/></svg>
<div class="a" style="left:682px;top:50px;width:1px;height:16px;background:#8a8a8a"></div>
<div class="a" style="left:686px;top:48px;width:98px;height:20px;background:#262728"></div>
<div class="t" style="left:688px;top:54px;font-size:10.2px;color:#f0f0f0">Override Width</div>
<div class="a" style="left:786px;top:48px;width:98px;height:20px;background:#262728"></div>
<div class="t" style="left:788px;top:54px;font-size:10.2px;color:#f0f0f0">Override Height</div>
<svg class="a" style="left:1139px;top:50px" width="20" height="15" viewBox="0 0 20 15"><rect x="0" y="0" width="10" height="13" fill="#000"/><rect x="1.5" y="1.5" width="4" height="4" fill="#fff"/><rect x="5.5" y="5.5" width="4" height="4" fill="#fff"/><path d="M11 6l3-3.5 3 3.5z M11 8.5l3 3.5 3-3.5z" fill="#bdbdbd"/></svg>
<svg class="a" style="left:1168px;top:48px" width="44" height="18" viewBox="0 0 44 18" fill="none" stroke="#bdbdbd" stroke-width="1.3"><circle cx="11" cy="7" r="5.5"/><path d="M7 11l-5.5 5.5M8.5 7h5M11 4.5v5"/><circle cx="37" cy="7" r="5.5"/><path d="M33 11l-5.5 5.5M34.5 7h5"/></svg>
<div class="t" style="left:1229px;top:50px;font-size:13px;color:#e0e0e0">100 %</div>
<svg class="a" style="left:1315px;top:51px" width="9" height="13" viewBox="0 0 9 13"><path d="M0.5 5.5 L4.5 1 L8.5 5.5Z M0.5 7.5 L4.5 12 L8.5 7.5Z" fill="#bdbdbd"/></svg>
<svg class="a" style="left:1334px;top:48px" width="70" height="18" viewBox="0 0 70 18" fill="none" stroke="#bdbdbd" stroke-width="1.3"><circle cx="10.5" cy="7" r="5.5"/><path d="M6.5 11l-5.5 5.5"/><path d="M8.5 5l4 4M12.5 5l-4 4" stroke-width="1.6"/><circle cx="36.5" cy="7" r="5.5"/><path d="M32.5 11l-5.5 5.5M34 4.5h-1v1M39 4.5h1v1M34 9.5h-1v-1M39 9.5h1v-1"/><path d="M57 5.5a5 5 0 1 0 2-2.5" /><path d="M56 1.5v4h4" /></svg>
<div class="a pn" style="left:568px;top:70px;width:830px;height:992px"></div>
<div class="a" style="left:1398px;top:70px;width:10px;height:992px;background:#343536"></div>
<div class="a" style="left:568px;top:1062px;width:830px;height:10px;background:#383839"></div>
<div class="a" style="left:972px;top:1062px;width:30px;height:10px;background:#4a4a4a"></div>
<div class="a" style="left:1398px;top:1062px;width:10px;height:10px;background:#2e2f31;border:1px solid #cfcfcf;border-right:none;border-bottom:none"></div>
<div class="a" style="left:1408px;top:27px;width:1px;height:1045px;background:#5a5a5a"></div>

<div class="a" style="left:782px;top:147px;width:66px;height:20px;background:#d6259c;border-radius:2px 2px 0 0"></div>
<div class="t" style="left:787px;top:151px;font-size:13px;color:#f4f4f4">rectangle</div>
<div class="a" style="left:782px;top:165px;width:402px;height:802px;background:#c2c2c2;border-left:2px solid #d6259c;border-top:2px solid #d6259c;border-right:2px solid #ff0000;border-bottom:2px solid #ff0000"></div>
<div class="t" style="left:784px;top:178px;width:398px;text-align:center;font-size:21px;color:#141414">To Do</div>
<div class="a" style="left:793px;top:216px;width:381px;height:57px;background:#d6d7d7;border-radius:10px"></div>
<div class="a" style="left:801px;top:235px;width:18px;height:18px;border:2px solid #555"></div>
<div class="t" style="left:827px;top:235px;font-size:21px;color:#1f1f1f">My To Do</div>
<div class="a" style="left:793px;top:914px;width:380px;height:36px;background:#d6d7d7;border-radius:2px;box-shadow:0 2px 3px rgba(0,0,0,0.25)"></div>
<div class="t" style="left:793px;top:925px;width:380px;text-align:center;font-size:13.6px;color:#1f1f1f">ADD TO DO</div>

<!-- ============ CODE ============ -->
<div class="a dk" style="left:1409px;top:27px;width:494px;height:19px"></div>
<div class="a" style="left:1409px;top:44px;width:494px;height:2px;background:#e8e8e8"></div>
<div class="tab on" style="left:1409px;top:27px;width:63px;height:18px;line-height:18px;padding-left:8px;font-size:13.5px">Code</div>
<div class="x" style="left:1457px;top:30px;color:#000"></div>
<div class="a pn" style="left:1409px;top:46px;width:494px;height:1026px"></div>
<div class="a" style="left:1409px;top:46px;width:62px;height:1016px;background:#3a3b3d"></div>
<div class="a" style="left:1892px;top:46px;width:10px;height:1016px;background:#333435"></div>
<div class="a" style="left:1892px;top:46px;width:10px;height:365px;background:#404142"></div>
<div class="a" style="left:1409px;top:1062px;width:483px;height:10px;background:#333435"></div>
<div class="a" style="left:1409px;top:1062px;width:294px;height:10px;background:#404142"></div>
<div class="a" style="left:1892px;top:1062px;width:10px;height:10px;border:1px solid #cfcfcf;border-right:none;border-bottom:none"></div>
<div class="a" style="left:1902px;top:27px;width:1px;height:1045px;background:#5a5a5a"></div>
<div class="a" style="left:1409px;top:46px;width:483px;height:1016px;overflow:hidden">

<div class="t code" style="left:0px;top:3.5px;width:40px;text-align:right;line-height:16px;color:#bfbfbf;font-weight:normal;font-size:12px;font-family:'Liberation Sans'">1</div>
<svg class="a" style="left:52px;top:6.5px" width="6" height="10" viewBox="0 0 6 10"><path d="M1 1l4 4-4 4" fill="none" stroke="#bdbdbd" stroke-width="1.2"/></svg>
<div class="t code" style="left:66px;top:3.5px;line-height:16px;color:#e3dca8"><span style="color:#bdbdbd;font-style:italic">/*</span></div>
<div class="a" style="left:91px;top:4.5px;width:59px;height:15px;border:1px solid #d8cf9a;border-radius:5px"></div>
<div class="t code" style="left:102px;top:4.5px;line-height:16px;color:#e3dca8">...*/</div>
<div class="t code" style="left:0px;top:19.5px;width:40px;text-align:right;line-height:16px;color:#bfbfbf;font-weight:normal;font-size:12px;font-family:'Liberation Sans'">7</div>
<div class="t code" style="left:66px;top:19.5px;line-height:16px"></div>
<div class="t code" style="left:0px;top:35.5px;width:40px;text-align:right;line-height:16px;color:#bfbfbf;font-weight:normal;font-size:12px;font-family:'Liberation Sans'">8</div>
<div class="t code" style="left:66px;top:35.5px;line-height:16px"><span style="color:#4cc8da;font-style:italic">import</span><span style="color:#e3dca8"> QtQuick 6.3</span></div>
<div class="t code" style="left:0px;top:51.5px;width:40px;text-align:right;line-height:16px;color:#bfbfbf;font-weight:normal;font-size:12px;font-family:'Liberation Sans'">9</div>
<div class="t code" style="left:66px;top:51.5px;line-height:16px"><span style="color:#4cc8da;font-style:italic">import</span><span style="color:#e3dca8"> QtQuick.Controls 6.3</span></div>
<div class="t code" style="left:0px;top:67.5px;width:40px;text-align:right;line-height:16px;color:#bfbfbf;font-weight:normal;font-size:12px;font-family:'Liberation Sans'">10</div>
<div class="t code" style="left:66px;top:67.5px;line-height:16px"><span style="color:#4cc8da;font-style:italic">import</span><span style="color:#e3dca8"> ToDoDemo</span></div>
<div class="t code" style="left:0px;top:83.5px;width:40px;text-align:right;line-height:16px;color:#bfbfbf;font-weight:normal;font-size:12px;font-family:'Liberation Sans'">11</div>
<div class="t code" style="left:66px;top:83.5px;line-height:16px"><span style="color:#4cc8da;font-style:italic">import</span><span style="color:#e3dca8"> QtQuick.Layouts 1.0</span></div>
<div class="t code" style="left:0px;top:99.5px;width:40px;text-align:right;line-height:16px;color:#bfbfbf;font-weight:normal;font-size:12px;font-family:'Liberation Sans'">12</div>
<div class="t code" style="left:66px;top:99.5px;line-height:16px"></div>
<div class="t code" style="left:0px;top:115.5px;width:40px;text-align:right;line-height:16px;color:#e6c440;font-weight:bold;font-size:12px;font-family:'Liberation Sans'">13</div>
<svg class="a" style="left:51px;top:120.5px" width="9" height="6" viewBox="0 0 9 6"><path d="M1 1l3.5 3.5L8 1" fill="none" stroke="#bdbdbd" stroke-width="1.2"/></svg>
<div class="t code" style="left:66px;top:115.5px;line-height:16px"><span style="color:#7ec340">Rectangle</span><span style="color:#e3dca8">  {</span></div>
<svg class="a" style="left:134px;top:117.5px" width="10" height="12" viewBox="0 0 10 12"><circle cx="5" cy="4.5" r="4.2" fill="#f0c419"/><rect x="3" y="8.5" width="4" height="3" fill="#8a8a8a"/></svg>
<div class="t code" style="left:0px;top:131.5px;width:40px;text-align:right;line-height:16px;color:#bfbfbf;font-weight:normal;font-size:12px;font-family:'Liberation Sans'">14</div>
<div class="t code" style="left:66px;top:131.5px;line-height:16px"><span style="color:#e3dca8">    </span><span style="color:#ef5aa8">id</span><span style="color:#e3dca8">: </span><span style="color:#9fd3df;font-style:italic">rectangle</span></div>
<div class="t code" style="left:0px;top:147.5px;width:40px;text-align:right;line-height:16px;color:#bfbfbf;font-weight:normal;font-size:12px;font-family:'Liberation Sans'">15</div>
<div class="t code" style="left:66px;top:147.5px;line-height:16px"><span style="color:#e3dca8">    </span><span style="color:#ef5aa8">width</span><span style="color:#e3dca8">: </span><span style="color:#7ec340">Constants</span><span style="color:#e3dca8">.width</span></div>
<div class="t code" style="left:0px;top:163.5px;width:40px;text-align:right;line-height:16px;color:#bfbfbf;font-weight:normal;font-size:12px;font-family:'Liberation Sans'">16</div>
<div class="t code" style="left:66px;top:163.5px;line-height:16px"><span style="color:#e3dca8">    </span><span style="color:#ef5aa8">height</span><span style="color:#e3dca8">: </span><span style="color:#7ec340">Constants</span><span style="color:#e3dca8">.height</span></div>
<div class="t code" style="left:0px;top:179.5px;width:40px;text-align:right;line-height:16px;color:#bfbfbf;font-weight:normal;font-size:12px;font-family:'Liberation Sans'">17</div>
<div class="t code" style="left:66px;top:179.5px;line-height:16px"></div>
<div class="t code" style="left:0px;top:195.5px;width:40px;text-align:right;line-height:16px;color:#bfbfbf;font-weight:normal;font-size:12px;font-family:'Liberation Sans'">18</div>
<div class="t code" style="left:66px;top:195.5px;line-height:16px"><span style="color:#e3dca8">    </span><span style="color:#ef5aa8">color</span><span style="color:#e3dca8">: </span><span style="color:#7ec340">Constants</span><span style="color:#e3dca8">.backgroundColor</span></div>
<div class="t code" style="left:0px;top:211.5px;width:40px;text-align:right;line-height:16px;color:#bfbfbf;font-weight:normal;font-size:12px;font-family:'Liberation Sans'">19</div>
<div class="t code" style="left:66px;top:211.5px;line-height:16px"><span style="color:#e3dca8">    </span><span style="color:#4cc8da;font-style:italic">property</span><span style="color:#e3dca8"> </span><span style="color:#4cc8da;font-style:italic">bool</span><span style="color:#e3dca8"> </span><span style="color:#ef5aa8">isDialogOpen</span><span style="color:#e3dca8">: </span><span style="color:#e3dca8">false</span></div>
<div class="t code" style="left:0px;top:227.5px;width:40px;text-align:right;line-height:16px;color:#bfbfbf;font-weight:normal;font-size:12px;font-family:'Liberation Sans'">20</div>
<div class="t code" style="left:66px;top:227.5px;line-height:16px"></div>
<div class="t code" style="left:0px;top:243.5px;width:40px;text-align:right;line-height:16px;color:#bfbfbf;font-weight:normal;font-size:12px;font-family:'Liberation Sans'">21</div>
<svg class="a" style="left:51px;top:248.5px" width="9" height="6" viewBox="0 0 9 6"><path d="M1 1l3.5 3.5L8 1" fill="none" stroke="#bdbdbd" stroke-width="1.2"/></svg>
<div class="t code" style="left:66px;top:243.5px;line-height:16px"><span style="color:#e3dca8">    </span><span style="color:#7ec340">Text</span><span style="color:#e3dca8"> {</span></div>
<div class="t code" style="left:0px;top:259.5px;width:40px;text-align:right;line-height:16px;color:#bfbfbf;font-weight:normal;font-size:12px;font-family:'Liberation Sans'">22</div>
<div class="t code" style="left:66px;top:259.5px;line-height:16px"><span style="color:#e3dca8">        </span><span style="color:#ef5aa8">id</span><span style="color:#e3dca8">: </span><span style="color:#9fd3df;font-style:italic">text1</span></div>
<div class="t code" style="left:0px;top:275.5px;width:40px;text-align:right;line-height:16px;color:#bfbfbf;font-weight:normal;font-size:12px;font-family:'Liberation Sans'">23</div>
<div class="t code" style="left:66px;top:275.5px;line-height:16px"><span style="color:#e3dca8">        </span><span style="color:#ef5aa8">text</span><span style="color:#e3dca8">: </span><span style="color:#4f76dc;font-style:italic">qsTr</span><span style="color:#e3dca8">(</span><span style="color:#e3a05a">&quot;To Do&quot;</span><span style="color:#e3dca8">)</span></div>
<div class="t code" style="left:0px;top:291.5px;width:40px;text-align:right;line-height:16px;color:#bfbfbf;font-weight:normal;font-size:12px;font-family:'Liberation Sans'">24</div>
<div class="t code" style="left:66px;top:291.5px;line-height:16px"><span style="color:#e3dca8">        </span><span style="color:#ef5aa8">anchors.left</span><span style="color:#e3dca8">: </span><span style="color:#e6dfa6;font-style:italic">parent</span><span style="color:#e3dca8">.left</span></div>
<div class="t code" style="left:0px;top:307.5px;width:40px;text-align:right;line-height:16px;color:#bfbfbf;font-weight:normal;font-size:12px;font-family:'Liberation Sans'">25</div>
<div class="t code" style="left:66px;top:307.5px;line-height:16px"><span style="color:#e3dca8">        </span><span style="color:#ef5aa8">anchors.right</span><span style="color:#e3dca8">: </span><span style="color:#e6dfa6;font-style:italic">parent</span><span style="color:#e3dca8">.right</span></div>
<div class="t code" style="left:0px;top:323.5px;width:40px;text-align:right;line-height:16px;color:#bfbfbf;font-weight:normal;font-size:12px;font-family:'Liberation Sans'">26</div>
<div class="t code" style="left:66px;top:323.5px;line-height:16px"><span style="color:#e3dca8">        </span><span style="color:#ef5aa8">anchors.top</span><span style="color:#e3dca8">: </span><span style="color:#e6dfa6;font-style:italic">parent</span><span style="color:#e3dca8">.top</span></div>
<div class="t code" style="left:0px;top:339.5px;width:40px;text-align:right;line-height:16px;color:#bfbfbf;font-weight:normal;font-size:12px;font-family:'Liberation Sans'">27</div>
<div class="t code" style="left:66px;top:339.5px;line-height:16px"><span style="color:#e3dca8">        </span><span style="color:#ef5aa8">font.pixelSize</span><span style="color:#e3dca8">: 22</span></div>
<div class="t code" style="left:0px;top:355.5px;width:40px;text-align:right;line-height:16px;color:#bfbfbf;font-weight:normal;font-size:12px;font-family:'Liberation Sans'">28</div>
<div class="t code" style="left:66px;top:355.5px;line-height:16px"><span style="color:#e3dca8">        </span><span style="color:#ef5aa8">horizontalAlignment</span><span style="color:#e3dca8">: </span><span style="color:#7ec340">Text</span><span style="color:#e3dca8">.AlignHCenter</span></div>
<div class="t code" style="left:0px;top:371.5px;width:40px;text-align:right;line-height:16px;color:#bfbfbf;font-weight:normal;font-size:12px;font-family:'Liberation Sans'">29</div>
<div class="t code" style="left:66px;top:371.5px;line-height:16px"><span style="color:#e3dca8">        </span><span style="color:#ef5aa8">verticalAlignment</span><span style="color:#e3dca8">: </span><span style="color:#7ec340">Text</span><span style="color:#e3dca8">.AlignVCenter</span></div>
<div class="t code" style="left:0px;top:387.5px;width:40px;text-align:right;line-height:16px;color:#bfbfbf;font-weight:normal;font-size:12px;font-family:'Liberation Sans'">30</div>
<div class="t code" style="left:66px;top:387.5px;line-height:16px"><span style="color:#e3dca8">        </span><span style="color:#ef5aa8">anchors.rightMargin</span><span style="color:#e3dca8">: 10</span></div>
<div class="t code" style="left:0px;top:403.5px;width:40px;text-align:right;line-height:16px;color:#bfbfbf;font-weight:normal;font-size:12px;font-family:'Liberation Sans'">31</div>
<div class="t code" style="left:66px;top:403.5px;line-height:16px"><span style="color:#e3dca8">        </span><span style="color:#ef5aa8">anchors.leftMargin</span><span style="color:#e3dca8">: 10</span></div>
<div class="t code" style="left:0px;top:419.5px;width:40px;text-align:right;line-height:16px;color:#bfbfbf;font-weight:normal;font-size:12px;font-family:'Liberation Sans'">32</div>
<div class="t code" style="left:66px;top:419.5px;line-height:16px"><span style="color:#e3dca8">        </span><span style="color:#ef5aa8">anchors.topMargin</span><span style="color:#e3dca8">: 10</span></div>
<div class="t code" style="left:0px;top:435.5px;width:40px;text-align:right;line-height:16px;color:#bfbfbf;font-weight:normal;font-size:12px;font-family:'Liberation Sans'">33</div>
<div class="t code" style="left:66px;top:435.5px;line-height:16px"><span style="color:#e3dca8">    </span><span style="color:#e3dca8">}</span></div>
<div class="t code" style="left:0px;top:451.5px;width:40px;text-align:right;line-height:16px;color:#bfbfbf;font-weight:normal;font-size:12px;font-family:'Liberation Sans'">34</div>
<div class="t code" style="left:66px;top:451.5px;line-height:16px"></div>
<div class="t code" style="left:0px;top:467.5px;width:40px;text-align:right;line-height:16px;color:#bfbfbf;font-weight:normal;font-size:12px;font-family:'Liberation Sans'">35</div>
<svg class="a" style="left:51px;top:472.5px" width="9" height="6" viewBox="0 0 9 6"><path d="M1 1l3.5 3.5L8 1" fill="none" stroke="#bdbdbd" stroke-width="1.2"/></svg>
<div class="t code" style="left:66px;top:467.5px;line-height:16px"><span style="color:#e3dca8">    </span><span style="color:#7ec340">Button</span><span style="color:#e3dca8"> {</span></div>
<div class="t code" style="left:0px;top:483.5px;width:40px;text-align:right;line-height:16px;color:#bfbfbf;font-weight:normal;font-size:12px;font-family:'Liberation Sans'">36</div>
<div class="t code" style="left:66px;top:483.5px;line-height:16px"><span style="color:#e3dca8">        </span><span style="color:#ef5aa8">id</span><span style="color:#e3dca8">: </span><span style="color:#9fd3df;font-style:italic">addToDoButton</span></div>
<div class="t code" style="left:0px;top:499.5px;width:40px;text-align:right;line-height:16px;color:#bfbfbf;font-weight:normal;font-size:12px;font-family:'Liberation Sans'">37</div>
<div class="t code" style="left:66px;top:499.5px;line-height:16px"><span style="color:#e3dca8">        </span><span style="color:#ef5aa8">y</span><span style="color:#e3dca8">: 491</span></div>
<div class="t code" style="left:0px;top:515.5px;width:40px;text-align:right;line-height:16px;color:#bfbfbf;font-weight:normal;font-size:12px;font-family:'Liberation Sans'">38</div>
<div class="t code" style="left:66px;top:515.5px;line-height:16px"><span style="color:#e3dca8">        </span><span style="color:#ef5aa8">text</span><span style="color:#e3dca8">: </span><span style="color:#4f76dc;font-style:italic">qsTr</span><span style="color:#e3dca8">(</span><span style="color:#e3a05a">&quot;Add To Do&quot;</span><span style="color:#e3dca8">)</span></div>
<div class="t code" style="left:0px;top:531.5px;width:40px;text-align:right;line-height:16px;color:#bfbfbf;font-weight:normal;font-size:12px;font-family:'Liberation Sans'">39</div>
<div class="t code" style="left:66px;top:531.5px;line-height:16px"><span style="color:#e3dca8">        </span><span style="color:#ef5aa8">anchors.left</span><span style="color:#e3dca8">: </span><span style="color:#e6dfa6;font-style:italic">parent</span><span style="color:#e3dca8">.left</span></div>
<div class="t code" style="left:0px;top:547.5px;width:40px;text-align:right;line-height:16px;color:#bfbfbf;font-weight:normal;font-size:12px;font-family:'Liberation Sans'">40</div>
<div class="t code" style="left:66px;top:547.5px;line-height:16px"><span style="color:#e3dca8">        </span><span style="color:#ef5aa8">anchors.right</span><span style="color:#e3dca8">: </span><span style="color:#e6dfa6;font-style:italic">parent</span><span style="color:#e3dca8">.right</span></div>
<div class="t code" style="left:0px;top:563.5px;width:40px;text-align:right;line-height:16px;color:#bfbfbf;font-weight:normal;font-size:12px;font-family:'Liberation Sans'">41</div>
<div class="t code" style="left:66px;top:563.5px;line-height:16px"><span style="color:#e3dca8">        </span><span style="color:#ef5aa8">anchors.bottom</span><span style="color:#e3dca8">: </span><span style="color:#e6dfa6;font-style:italic">parent</span><span style="color:#e3dca8">.bottom</span></div>
<div class="t code" style="left:0px;top:579.5px;width:40px;text-align:right;line-height:16px;color:#bfbfbf;font-weight:normal;font-size:12px;font-family:'Liberation Sans'">42</div>
<div class="t code" style="left:66px;top:579.5px;line-height:16px"><span style="color:#e3dca8">        </span><span style="color:#ef5aa8">anchors.rightMargin</span><span style="color:#e3dca8">: 10</span></div>
<div class="t code" style="left:0px;top:595.5px;width:40px;text-align:right;line-height:16px;color:#bfbfbf;font-weight:normal;font-size:12px;font-family:'Liberation Sans'">43</div>
<div class="t code" style="left:66px;top:595.5px;line-height:16px"><span style="color:#e3dca8">        </span><span style="color:#ef5aa8">anchors.leftMargin</span><span style="color:#e3dca8">: 10</span></div>
<div class="t code" style="left:0px;top:611.5px;width:40px;text-align:right;line-height:16px;color:#bfbfbf;font-weight:normal;font-size:12px;font-family:'Liberation Sans'">44</div>
<div class="t code" style="left:66px;top:611.5px;line-height:16px"><span style="color:#e3dca8">        </span><span style="color:#ef5aa8">anchors.bottomMargin</span><span style="color:#e3dca8">: 10</span></div>
<div class="t code" style="left:0px;top:627.5px;width:40px;text-align:right;line-height:16px;color:#bfbfbf;font-weight:normal;font-size:12px;font-family:'Liberation Sans'">45</div>
<div class="t code" style="left:66px;top:627.5px;line-height:16px"></div>
<div class="t code" style="left:0px;top:643.5px;width:40px;text-align:right;line-height:16px;color:#bfbfbf;font-weight:normal;font-size:12px;font-family:'Liberation Sans'">46</div>
<svg class="a" style="left:51px;top:648.5px" width="9" height="6" viewBox="0 0 9 6"><path d="M1 1l3.5 3.5L8 1" fill="none" stroke="#bdbdbd" stroke-width="1.2"/></svg>
<div class="t code" style="left:66px;top:643.5px;line-height:16px"><span style="color:#e3dca8">        </span><span style="color:#7ec340">Connections</span><span style="color:#e3dca8"> {</span></div>
<div class="t code" style="left:0px;top:659.5px;width:40px;text-align:right;line-height:16px;color:#bfbfbf;font-weight:normal;font-size:12px;font-family:'Liberation Sans'">47</div>
<div class="t code" style="left:66px;top:659.5px;line-height:16px"><span style="color:#e3dca8">            </span><span style="color:#ef5aa8">target</span><span style="color:#e3dca8">: </span><span style="color:#9fd3df;font-style:italic">addToDoButton</span></div>
<div class="t code" style="left:0px;top:675.5px;width:40px;text-align:right;line-height:16px;color:#bfbfbf;font-weight:normal;font-size:12px;font-family:'Liberation Sans'">48</div>
<div class="t code" style="left:66px;top:675.5px;line-height:16px"><span style="color:#e3dca8">            </span><span style="color:#ef5aa8">onClicked</span><span style="color:#e3dca8">: </span><span style="color:#9fd3df;font-style:italic">rectangle</span><span style="color:#e3dca8">.isDialogOpen = !</span><span style="color:#9fd3df;font-style:italic">rectangle</span></div>
<div class="t code" style="left:0px;top:691.5px;width:40px;text-align:right;line-height:16px;color:#bfbfbf;font-weight:normal;font-size:12px;font-family:'Liberation Sans'">49</div>
<div class="t code" style="left:66px;top:691.5px;line-height:16px"><span style="color:#e3dca8">        </span><span style="color:#e3dca8">}</span></div>
<div class="t code" style="left:0px;top:707.5px;width:40px;text-align:right;line-height:16px;color:#bfbfbf;font-weight:normal;font-size:12px;font-family:'Liberation Sans'">50</div>
<div class="t code" style="left:66px;top:707.5px;line-height:16px"><span style="color:#e3dca8">    </span><span style="color:#e3dca8">}</span></div>
<div class="t code" style="left:0px;top:723.5px;width:40px;text-align:right;line-height:16px;color:#bfbfbf;font-weight:normal;font-size:12px;font-family:'Liberation Sans'">51</div>
<div class="t code" style="left:66px;top:723.5px;line-height:16px"></div>
<div class="t code" style="left:0px;top:739.5px;width:40px;text-align:right;line-height:16px;color:#bfbfbf;font-weight:normal;font-size:12px;font-family:'Liberation Sans'">52</div>
<div class="t code" style="left:66px;top:739.5px;line-height:16px"></div>
<div class="t code" style="left:0px;top:755.5px;width:40px;text-align:right;line-height:16px;color:#bfbfbf;font-weight:normal;font-size:12px;font-family:'Liberation Sans'">53</div>
<svg class="a" style="left:51px;top:760.5px" width="9" height="6" viewBox="0 0 9 6"><path d="M1 1l3.5 3.5L8 1" fill="none" stroke="#bdbdbd" stroke-width="1.2"/></svg>
<div class="t code" style="left:66px;top:755.5px;line-height:16px"><span style="color:#e3dca8">    </span><span style="color:#7ec340">Rectangle</span><span style="color:#e3dca8"> {</span></div>
<div class="t code" style="left:0px;top:771.5px;width:40px;text-align:right;line-height:16px;color:#bfbfbf;font-weight:normal;font-size:12px;font-family:'Liberation Sans'">54</div>
<div class="t code" style="left:66px;top:771.5px;line-height:16px"><span style="color:#e3dca8">        </span><span style="color:#ef5aa8">id</span><span style="color:#e3dca8">: </span><span style="color:#9fd3df;font-style:italic">addToDoDialog</span></div>
<div class="t code" style="left:0px;top:787.5px;width:40px;text-align:right;line-height:16px;color:#bfbfbf;font-weight:normal;font-size:12px;font-family:'Liberation Sans'">55</div>
<div class="t code" style="left:66px;top:787.5px;line-height:16px"><span style="color:#e3dca8">        </span><span style="color:#ef5aa8">x</span><span style="color:#e3dca8">: 10</span></div>
<div class="t code" style="left:0px;top:803.5px;width:40px;text-align:right;line-height:16px;color:#bfbfbf;font-weight:normal;font-size:12px;font-family:'Liberation Sans'">56</div>
<div class="t code" style="left:66px;top:803.5px;line-height:16px"><span style="color:#e3dca8">        </span><span style="color:#ef5aa8">y</span><span style="color:#e3dca8">: 570</span></div>
<div class="t code" style="left:0px;top:819.5px;width:40px;text-align:right;line-height:16px;color:#bfbfbf;font-weight:normal;font-size:12px;font-family:'Liberation Sans'">57</div>
<div class="t code" style="left:66px;top:819.5px;line-height:16px"><span style="color:#e3dca8">        </span><span style="color:#ef5aa8">width</span><span style="color:#e3dca8">: 380</span></div>
<div class="t code" style="left:0px;top:835.5px;width:40px;text-align:right;line-height:16px;color:#bfbfbf;font-weight:normal;font-size:12px;font-family:'Liberation Sans'">58</div>
<div class="t code" style="left:66px;top:835.5px;line-height:16px"><span style="color:#e3dca8">        </span><span style="color:#ef5aa8">height</span><span style="color:#e3dca8">: 166</span></div>
<div class="t code" style="left:0px;top:851.5px;width:40px;text-align:right;line-height:16px;color:#bfbfbf;font-weight:normal;font-size:12px;font-family:'Liberation Sans'">59</div>
<div class="t code" style="left:66px;top:851.5px;line-height:16px"><span style="color:#e3dca8">        </span><span style="color:#ef5aa8">visible</span><span style="color:#e3dca8">: </span><span style="color:#9fd3df;font-style:italic">rectangle</span><span style="color:#e3dca8">.isDialogOpen</span></div>
<div class="t code" style="left:0px;top:867.5px;width:40px;text-align:right;line-height:16px;color:#bfbfbf;font-weight:normal;font-size:12px;font-family:'Liberation Sans'">60</div>
<div class="t code" style="left:66px;top:867.5px;line-height:16px"><span style="color:#e3dca8">        </span><span style="color:#ef5aa8">color</span><span style="color:#e3dca8">: </span><span style="color:#e3a05a">&quot;#d6d7d7&quot;</span></div>
<div class="t code" style="left:0px;top:883.5px;width:40px;text-align:right;line-height:16px;color:#bfbfbf;font-weight:normal;font-size:12px;font-family:'Liberation Sans'">61</div>
<div class="t code" style="left:66px;top:883.5px;line-height:16px"><span style="color:#e3dca8">        </span><span style="color:#ef5aa8">radius</span><span style="color:#e3dca8">: 30</span></div>
<div class="t code" style="left:0px;top:899.5px;width:40px;text-align:right;line-height:16px;color:#bfbfbf;font-weight:normal;font-size:12px;font-family:'Liberation Sans'">62</div>
<div class="t code" style="left:66px;top:899.5px;line-height:16px"></div>
<div class="t code" style="left:0px;top:915.5px;width:40px;text-align:right;line-height:16px;color:#bfbfbf;font-weight:normal;font-size:12px;font-family:'Liberation Sans'">63</div>
<svg class="a" style="left:51px;top:920.5px" width="9" height="6" viewBox="0 0 9 6"><path d="M1 1l3.5 3.5L8 1" fill="none" stroke="#bdbdbd" stroke-width="1.2"/></svg>
<div class="t code" style="left:66px;top:915.5px;line-height:16px"><span style="color:#e3dca8">        </span><span style="color:#7ec340">TextField</span><span style="color:#e3dca8"> {</span></div>
<div class="t code" style="left:0px;top:931.5px;width:40px;text-align:right;line-height:16px;color:#bfbfbf;font-weight:normal;font-size:12px;font-family:'Liberation Sans'">64</div>
<div class="t code" style="left:66px;top:931.5px;line-height:16px"><span style="color:#e3dca8">            </span><span style="color:#ef5aa8">id</span><span style="color:#e3dca8">: </span><span style="color:#9fd3df;font-style:italic">toDoTextInput</span></div>
<div class="t code" style="left:0px;top:947.5px;width:40px;text-align:right;line-height:16px;color:#bfbfbf;font-weight:normal;font-size:12px;font-family:'Liberation Sans'">65</div>
<div class="t code" style="left:66px;top:947.5px;line-height:16px"><span style="color:#e3dca8">            </span><span style="color:#ef5aa8">height</span><span style="color:#e3dca8">: 60</span></div>
<div class="t code" style="left:0px;top:963.5px;width:40px;text-align:right;line-height:16px;color:#bfbfbf;font-weight:normal;font-size:12px;font-family:'Liberation Sans'">66</div>
<div class="t code" style="left:66px;top:963.5px;line-height:16px"><span style="color:#e3dca8">            </span><span style="color:#ef5aa8">anchors.left</span><span style="color:#e3dca8">: </span><span style="color:#e6dfa6;font-style:italic">parent</span><span style="color:#e3dca8">.left</span></div>
<div class="t code" style="left:0px;top:979.5px;width:40px;text-align:right;line-height:16px;color:#bfbfbf;font-weight:normal;font-size:12px;font-family:'Liberation Sans'">67</div>
<div class="t code" style="left:66px;top:979.5px;line-height:16px"><span style="color:#e3dca8">            </span><span style="color:#ef5aa8">anchors.right</span><span style="color:#e3dca8">: </span><span style="color:#e6dfa6;font-style:italic">parent</span><span style="color:#e3dca8">.right</span></div>
<div class="t code" style="left:0px;top:995.5px;width:40px;text-align:right;line-height:16px;color:#bfbfbf;font-weight:normal;font-size:12px;font-family:'Liberation Sans'">68</div>
<div class="t code" style="left:66px;top:995.5px;line-height:16px"><span style="color:#e3dca8">            </span><span style="color:#ef5aa8">anchors.top</span><span style="color:#e3dca8">: </span><span style="color:#e6dfa6;font-style:italic">parent</span><span style="color:#e3dca8">.top</span></div>
<div class="t code" style="left:0px;top:1011.5px;width:40px;text-align:right;line-height:16px;color:#bfbfbf;font-weight:normal;font-size:12px;font-family:'Liberation Sans'">69</div>
<div class="t code" style="left:66px;top:1011.5px;line-height:16px"><span style="color:#e3dca8">            </span><span style="color:#ef5aa8">font.pixelSize</span><span style="color:#e3dca8">: 20</span></div>
</div>

<!-- ============ PROPERTIES ============ -->
<div class="a dk" style="left:1903px;top:27px;width:657px;height:19px"></div>
<div class="a" style="left:1903px;top:44px;width:657px;height:2px;background:#e8e8e8"></div>
<div class="tab on" style="left:1903px;top:27px;width:93px;height:18px;line-height:18px;padding-left:8px;font-size:13.5px">Properties</div>
<div class="x" style="left:1980px;top:30px;color:#000"></div>
<div class="t" style="left:2004px;top:30px;font-size:13.5px;color:#f0f0f0">Output</div>
<div class="x" style="left:2055px;top:30px;color:#d0d0d0"></div>
<div class="a" style="left:2070px;top:27px;width:1px;height:17px;background:#4a4a4a"></div>
<div class="a pn" style="left:1903px;top:46px;width:657px;height:772px"></div>
<div class="a" style="left:2549px;top:46px;width:11px;height:772px;background:#2a2a2b"></div>
<div class="a" style="left:2550px;top:46px;width:8px;height:620px;background:#4a4a4a"></div>

<div class="hdr" style="left:1903px;top:46px;width:646px;height:21px"></div>
<div class="tri" style="left:1906px;top:54px"></div>
<div class="t" style="left:1925px;top:51px;font-size:12.2px;color:#f0f0f0">COMPONENT</div>
<div class="t" style="left:1850px;top:84px;width:181px;text-align:right;font-size:12.5px;color:#ececec">Type</div>
<div class="inp" style="left:2072px;top:76px;width:426px;height:28px"></div>
<div class="t" style="left:2078px;top:84px;font-size:12.5px;color:#f0f0f0">Rectangle</div>
<div class="t" style="left:1850px;top:118px;width:181px;text-align:right;font-size:12.5px;color:#ececec">ID</div>
<div class="inp" style="left:2072px;top:110px;width:426px;height:29px"></div>
<div class="t" style="left:2078px;top:118px;font-size:12.5px;color:#f0f0f0">rectangle</div>
<div class="t" style="left:2526px;top:117px;font-size:14px;color:#8a8a8a">@</div>
<div class="t" style="left:1850px;top:152px;width:181px;text-align:right;font-size:12.5px;color:#ececec">Name</div>
<div class="inp" style="left:2072px;top:144px;width:426px;height:29px"></div>
<div class="t" style="left:2072px;top:152px;width:426px;text-align:center;font-size:12.5px;color:#f0f0f0">Add Annotation</div>
<div class="t" style="left:1850px;top:186px;width:181px;text-align:right;font-size:12.5px;color:#ececec">State</div>
<div class="inp" style="left:2072px;top:178px;width:426px;height:29px"></div>
<div class="t" style="left:2078px;top:186px;font-size:12.5px;color:#f0f0f0">base state</div>
<svg class="a" style="left:2476px;top:188px" width="14" height="8" viewBox="0 0 14 8"><path d="M1 1l6 6 6-6" fill="none" stroke="#e0e0e0" stroke-width="1.3"/></svg>
<div class="hdr" style="left:1903px;top:217px;width:646px;height:21px"></div>
<div class="tri" style="left:1906px;top:225px"></div>
<div class="t" style="left:1925px;top:222px;font-size:12.2px;color:#f0f0f0">LOCAL CUSTOM PROPERTIES</div>
<div class="t" style="left:1850px;top:256px;width:181px;text-align:right;font-size:12.5px;color:#ececec">isDialogOpen</div>
<div class="inp" style="left:2072px;top:248px;width:29px;height:29px"></div>
<div class="t" style="left:2107px;top:256px;font-size:12.5px;color:#2aaed6">false</div>
<svg class="a" style="left:2528px;top:257px" width="10" height="10" viewBox="0 0 10 10"><path d="M1 1l8 8M9 1l-8 8" stroke="#bdbdbd" stroke-width="1.3"/></svg>
<div class="inp" style="left:2072px;top:282px;width:29px;height:29px"></div>
<svg class="a" style="left:2081px;top:291px" width="11" height="11" viewBox="0 0 11 11"><path d="M5.5 0v11M0 5.5h11" stroke="#f4f4f4" stroke-width="1.6"/></svg>
<div class="hdr" style="left:1903px;top:321px;width:646px;height:21px"></div>
<div class="tri" style="left:1906px;top:329px"></div>
<div class="t" style="left:1925px;top:326px;font-size:12.2px;color:#f0f0f0">GEOMETRY - 2D</div>
<div class="t" style="left:1850px;top:360px;width:181px;text-align:right;font-size:12.5px;color:#ececec">Position</div>
<div class="inp" style="left:2072px;top:352px;width:190px;height:29px"></div>
<div class="t" style="left:2072px;top:360px;width:183px;text-align:right;font-size:12.5px;color:#f0f0f0">0</div>
<div class="t" style="left:2269px;top:360px;font-size:12.5px;color:#ececec">X</div>
<div class="inp" style="left:2308px;top:352px;width:190px;height:29px"></div>
<div class="t" style="left:2308px;top:360px;width:183px;text-align:right;font-size:12.5px;color:#f0f0f0">0</div>
<div class="t" style="left:2505px;top:360px;font-size:12.5px;color:#ececec">Y</div>
<div class="t" style="left:1850px;top:394px;width:181px;text-align:right;font-size:12.5px;color:#ececec">Size</div>
<svg class="a" style="left:2055px;top:394px" width="13" height="13" viewBox="0 0 13 13" fill="none" stroke="#2aaed6" stroke-width="1.6"><path d="M5.5 3.5l1.8-1.8a2.3 2.3 0 0 1 3.3 3.3L8.8 6.8"/><path d="M7.5 9.5l-1.8 1.8a2.3 2.3 0 0 1-3.3-3.3L4.2 6.2"/><path d="M5 8l3-3"/></svg>
<div class="inp" style="left:2072px;top:386px;width:190px;height:29px"></div>
<div class="t" style="left:2072px;top:394px;width:183px;text-align:right;font-size:12.5px;color:#2aaed6">400</div>
<div class="t" style="left:2268px;top:394px;font-size:12.5px;color:#ececec">W</div>
<svg class="a" style="left:2291px;top:394px" width="13" height="13" viewBox="0 0 13 13" fill="none" stroke="#2aaed6" stroke-width="1.6"><path d="M5.5 3.5l1.8-1.8a2.3 2.3 0 0 1 3.3 3.3L8.8 6.8"/><path d="M7.5 9.5l-1.8 1.8a2.3 2.3 0 0 1-3.3-3.3L4.2 6.2"/><path d="M5 8l3-3"/></svg>
<div class="inp" style="left:2308px;top:386px;width:190px;height:29px"></div>
<div class="t" style="left:2308px;top:394px;width:183px;text-align:right;font-size:12.5px;color:#2aaed6">800</div>
<div class="t" style="left:2505px;top:394px;font-size:12.5px;color:#ececec">H</div>
<div class="t" style="left:1850px;top:428px;width:181px;text-align:right;font-size:12.5px;color:#ececec">Rotation</div>
<div class="inp" style="left:2072px;top:420px;width:190px;height:29px"></div>
<div class="t" style="left:2072px;top:428px;width:183px;text-align:right;font-size:12.5px;color:#f0f0f0">0,00</div>
<div class="t" style="left:2272px;top:428px;font-size:12.5px;color:#ececec">°</div>
<div class="t" style="left:1850px;top:462px;width:181px;text-align:right;font-size:12.5px;color:#ececec">Scale</div>
<div class="inp" style="left:2072px;top:454px;width:426px;height:29px"></div>
<div class="t" style="left:2380px;top:463px;width:82px;text-align:right;font-size:12.5px;color:#f0f0f0">1,00</div>
<svg class="a" style="left:2476px;top:464px" width="14" height="8" viewBox="0 0 14 8"><path d="M1 1l6 6 6-6" fill="none" stroke="#e0e0e0" stroke-width="1.3"/></svg>
<div class="t" style="left:2504px;top:462px;font-size:12.5px;color:#ececec">%</div>
<div class="t" style="left:1850px;top:496px;width:181px;text-align:right;font-size:12.5px;color:#ececec">Z stack</div>
<div class="inp" style="left:2072px;top:488px;width:190px;height:29px"></div>
<div class="t" style="left:2072px;top:496px;width:183px;text-align:right;font-size:12.5px;color:#f0f0f0">0</div>
<div class="t" style="left:1850px;top:530px;width:181px;text-align:right;font-size:12.5px;color:#ececec">Origin</div>
<div class="inp" style="left:2072px;top:522px;width:29px;height:29px"></div>
<div class="a" style="left:2082px;top:532px;width:9px;height:9px;background:#2aaed6"></div>
<div class="hdr" style="left:1903px;top:561px;width:646px;height:21px"></div>
<div class="tri" style="left:1906px;top:569px"></div>
<div class="t" style="left:1925px;top:566px;font-size:12.2px;color:#f0f0f0">VISIBILITY</div>
<div class="t" style="left:1850px;top:600px;width:181px;text-align:right;font-size:12.5px;color:#ececec">Visibility</div>
<div class="inp" style="left:2072px;top:592px;width:29px;height:29px"></div>
<svg class="a" style="left:2079px;top:600px" width="14" height="12" viewBox="0 0 14 12"><path d="M1.5 6.5l3.5 3.5 7.5-8.5" fill="none" stroke="#f4f4f4" stroke-width="1.8"/></svg>
<div class="t" style="left:2107px;top:600px;font-size:12.5px;color:#ececec">Visible</div>
<div class="inp" style="left:2308px;top:592px;width:29px;height:29px"></div>
<div class="t" style="left:2343px;top:600px;font-size:12.5px;color:#ececec">Clip</div>
<div class="t" style="left:1850px;top:634px;width:181px;text-align:right;font-size:12.5px;color:#ececec">Opacity</div>
<div class="inp" style="left:2072px;top:626px;width:426px;height:29px"></div>
<div class="t" style="left:2380px;top:635px;width:82px;text-align:right;font-size:12.5px;color:#f0f0f0">1,00</div>
<svg class="a" style="left:2476px;top:636px" width="14" height="8" viewBox="0 0 14 8"><path d="M1 1l6 6 6-6" fill="none" stroke="#e0e0e0" stroke-width="1.3"/></svg>
<div class="a" style="left:1903px;top:669px;width:646px;height:23px;background:#2e2f31;border-top:2px solid #2aaed6;border-bottom:2px solid #2aaed6"></div>
<div class="a" style="left:1903px;top:669px;width:329px;height:23px;background:#2aaed6"></div>
<div class="t" style="left:1903px;top:675px;width:329px;text-align:center;font-size:12.5px;color:#1f1f1f">Rectangle</div>
<div class="t" style="left:2232px;top:675px;width:317px;text-align:center;font-size:12.5px;color:#2aaed6">Layout</div>
<div class="hdr" style="left:1903px;top:692px;width:646px;height:21px"></div>
<div class="tri" style="left:1906px;top:700px"></div>
<div class="t" style="left:1925px;top:697px;font-size:12.2px;color:#f0f0f0">RECTANGLE</div>
<div class="t" style="left:1850px;top:731px;width:181px;text-align:right;font-size:12.5px;color:#ececec">Fill color</div>
<div class="a" style="left:2073px;top:724px;width:188px;height:27px;background:#c2c2c2"></div>
<svg class="a" style="left:2291px;top:731px" width="13" height="13" viewBox="0 0 13 13" fill="none" stroke="#2aaed6" stroke-width="1.6"><path d="M5.5 3.5l1.8-1.8a2.3 2.3 0 0 1 3.3 3.3L8.8 6.8"/><path d="M7.5 9.5l-1.8 1.8a2.3 2.3 0 0 1-3.3-3.3L4.2 6.2"/><path d="M5 8l3-3"/></svg>
<div class="inp" style="left:2308px;top:723px;width:190px;height:29px"></div>
<div class="t" style="left:2314px;top:731px;font-size:12.5px;color:#f0f0f0">#c2c2c2</div>
<div class="t" style="left:1850px;top:765px;width:181px;text-align:right;font-size:12.5px;color:#ececec">Border color</div>
<div class="a" style="left:2073px;top:758px;width:188px;height:27px;background:#000"></div>
<div class="inp" style="left:2308px;top:757px;width:190px;height:29px"></div>
<div class="t" style="left:2314px;top:765px;font-size:12.5px;color:#f0f0f0">#000000</div>
<div class="t" style="left:1850px;top:799px;width:181px;text-align:right;font-size:12.5px;color:#ececec">Border width</div>
<div class="inp" style="left:2073px;top:791px;width:189px;height:29px"></div>
<div class="t" style="left:2073px;top:799px;width:182px;text-align:right;font-size:12.5px;color:#f0f0f0">1</div>

<!-- ============ CONNECTIONS ============ -->
<div class="a dk" style="left:1903px;top:818px;width:657px;height:18px"></div>
<div class="a" style="left:1903px;top:818px;width:657px;height:1px;background:#4a4a4a"></div>
<div class="a" style="left:1903px;top:836px;width:657px;height:2px;background:#e8e8e8"></div>
<div class="tab on" style="left:1903px;top:819px;width:106px;height:17px;line-height:17px;padding-left:8px;font-size:13.5px">Connections</div>
<div class="x" style="left:1994px;top:822px;color:#000"></div>
<div class="a pn" style="left:1903px;top:838px;width:657px;height:234px"></div>
<div class="a dk" style="left:1995px;top:838px;width:184px;height:23px"></div>
<div class="a" style="left:1903px;top:838px;width:92px;height:23px;background:#dcdcdc"></div>
<div class="t" style="left:1903px;top:843px;width:92px;text-align:center;font-size:12px;font-weight:bold;color:#111">Connections</div>
<div class="t" style="left:1995px;top:843px;width:92px;text-align:center;font-size:12px;font-weight:bold;color:#e0e0e0">Bindings</div>
<div class="t" style="left:2087px;top:843px;width:92px;text-align:center;font-size:12px;font-weight:bold;color:#e0e0e0">Properties</div>
<div class="a" style="left:1903px;top:861px;width:657px;height:2px;background:#e8e8e8"></div>
<div class="a dk" style="left:1903px;top:863px;width:657px;height:40px"></div>
<svg class="a" style="left:1911px;top:868px" width="40" height="12" viewBox="0 0 40 12"><path d="M6 0v12M0 6h12" stroke="#e0e0e0" stroke-width="1.3"/><path d="M26 6h12" stroke="#6a6a6a" stroke-width="1.3"/></svg>
<div class="a" style="left:1903px;top:885px;width:657px;height:1px;background:#1a1a1a"></div>
<div class="t" style="left:1909px;top:889px;font-size:12px;color:#ececec">Target</div>
<div class="a" style="left:1982px;top:886px;width:1px;height:16px;background:#333"></div>
<div class="t" style="left:1989px;top:889px;font-size:12px;color:#ececec">Signal Handler</div>
<div class="a" style="left:2142px;top:886px;width:1px;height:16px;background:#333"></div>
<div class="t" style="left:2149px;top:889px;font-size:12px;color:#ececec">Action</div>

<div class="t" style="left:1910px;top:913px;font-size:12px;color:#ececec">addToDoBu...</div>
<div class="t" style="left:1990px;top:913px;font-size:12px;color:#ececec">onClicked</div>
<div class="t" style="left:2150px;top:913px;font-size:12px;color:#ececec">rectangle.isDialogOpen = !rectangle.isDialogOpen</div>
<div class="t" style="left:1910px;top:943px;font-size:12px;color:#ececec">cancelButton</div>
<div class="t" style="left:1990px;top:943px;font-size:12px;color:#ececec">onClicked</div>
<div class="t" style="left:2150px;top:943px;font-size:12px;color:#ececec">rectangle.isDialogOpen = false</div>
<div class="t" style="left:1910px;top:973px;font-size:12px;color:#ececec">cancelButton</div>
<div class="t" style="left:1990px;top:973px;font-size:12px;color:#ececec">onClicked</div>
<div class="t" style="left:2150px;top:973px;font-size:12px;color:#ececec">toDoTextInput.text = ""</div>
<div class="t" style="left:1910px;top:1003px;font-size:12px;color:#ececec">addButton</div>
<div class="t" style="left:1990px;top:1003px;font-size:12px;color:#ececec">onClicked</div>
<div class="t" style="left:2150px;top:1003px;font-size:12px;color:#ececec">rectangle.isDialogOpen = false</div>
<div class="t" style="left:1910px;top:1033px;font-size:12px;color:#ececec">addButton</div>
<div class="t" style="left:1990px;top:1033px;font-size:12px;color:#ececec">onClicked</div>
<div class="t" style="left:2150px;top:1033px;font-size:12px;color:#ececec">myListModel.append(myListModel.createListElement())</div>
<div class="a" style="left:1903px;top:1071px;width:657px;height:1px;background:#4a4a4a"></div>

<!-- ============ STATES ============ -->
<div class="a" style="left:38px;top:1072px;width:2522px;height:1px;background:#4a4a4a"></div>
<div class="a dk" style="left:38px;top:1073px;width:2522px;height:17px"></div>
<div class="a" style="left:38px;top:1090px;width:2522px;height:2px;background:#e8e8e8"></div>
<div class="tab on" style="left:39px;top:1073px;width:69px;height:17px;line-height:17px;padding-left:8px;font-size:13.5px">States</div>
<div class="x" style="left:93px;top:1076px;color:#000"></div>
<div class="a pn" style="left:38px;top:1092px;width:2522px;height:291px"></div>
<div class="a" style="left:49px;top:1103px;width:264px;height:267px;background:#2aaed6"></div>
<div class="a" style="left:65px;top:1119px;width:232px;height:235px;background:#383838"></div>
<div class="inp" style="left:90px;top:1123px;width:138px;height:29px"></div>
<div class="t" style="left:96px;top:1131px;font-size:12.5px;color:#f0f0f0">base state</div>
<div class="t" style="left:248px;top:1131px;font-size:12.5px;font-style:italic;color:#f0f0f0">Default</div>
<div class="a" style="left:65px;top:1156px;width:232px;height:2px;background:#7a7a7a"></div>
<div class="a" style="left:136px;top:1167px;width:90px;height:178px;background:#c2c2c2;border:1px solid #a8a8a8"></div>
<div class="t" style="left:136px;top:1170px;width:90px;text-align:center;font-size:5px;color:#333">To Do</div>
<div class="a" style="left:139px;top:1179px;width:84px;height:12px;background:#d6d7d7;border-radius:2px"></div>
<div class="a" style="left:141px;top:1183px;width:4px;height:4px;border:1px solid #777"></div>
<div class="t" style="left:147px;top:1182px;font-size:5.5px;color:#444">My To Do</div>
<div class="a" style="left:139px;top:1332px;width:84px;height:9px;background:#d6d7d7"></div>
<div class="t" style="left:136px;top:1334px;width:90px;text-align:center;font-size:4px;color:#444">ADD TO DO</div>

<div class="a" style="left:313px;top:1103px;width:266px;height:267px;background:#3c3c3c"></div>
<div class="a" style="left:331px;top:1119px;width:232px;height:235px;background:#383838"></div>
<svg class="a" style="left:339px;top:1131px" width="13" height="13" viewBox="0 0 13 13" fill="none" stroke="#f4f4f4" stroke-width="1.6"><path d="M5.5 3.5l1.8-1.8a2.3 2.3 0 0 1 3.3 3.3L8.8 6.8"/><path d="M7.5 9.5l-1.8 1.8a2.3 2.3 0 0 1-3.3-3.3L4.2 6.2"/><path d="M5 8l3-3"/></svg>
<div class="inp" style="left:356px;top:1123px;width:138px;height:29px"></div>
<div class="t" style="left:362px;top:1131px;font-size:12.5px;color:#f0f0f0">clicked</div>
<div class="a" style="left:331px;top:1156px;width:232px;height:2px;background:#7a7a7a"></div>
<div class="a" style="left:402px;top:1167px;width:90px;height:178px;background:#c2c2c2;border:1px solid #a8a8a8"></div>
<div class="t" style="left:402px;top:1170px;width:90px;text-align:center;font-size:5px;color:#333">To Do</div>
<div class="a" style="left:405px;top:1179px;width:84px;height:12px;background:#d6d7d7;border-radius:2px"></div>
<div class="a" style="left:407px;top:1183px;width:4px;height:4px;border:1px solid #777"></div>
<div class="t" style="left:413px;top:1182px;font-size:5.5px;color:#444">My To Do</div>
<div class="a" style="left:405px;top:1332px;width:84px;height:9px;background:#d6d7d7"></div>
<div class="t" style="left:402px;top:1334px;width:90px;text-align:center;font-size:4px;color:#444">ADD TO DO</div>

<div class="a" style="left:581px;top:1103px;width:264px;height:267px;background:#3c3c3c"></div>
<div class="a" style="left:596px;top:1118px;width:235px;height:237px;background:#383838"></div>
<div class="a" style="left:707px;top:1201px;width:10px;height:63px;background:#3f3f3f"></div>
<div class="a" style="left:680px;top:1228px;width:65px;height:10px;background:#3f3f3f"></div>

<!-- ============ UPDATE BAR ============ -->
<div class="a" style="left:38px;top:1383px;width:2522px;height:1px;background:#707070"></div>
<div class="a" style="left:38px;top:1384px;width:2522px;height:30px;background:#4f4c00"></div>
<div class="t" style="left:43px;top:1392px;font-size:13.3px;color:#f2f2f2">New updates are available. Start the update?</div>
<div class="a" style="left:2356px;top:1388px;width:50px;height:21px;background:#5f5c1c;border:1px solid #7d7a3c"></div>
<div class="t" style="left:2363px;top:1394px;font-size:11px;font-weight:bold;color:#eaeaea">Show D</div>
<div class="a" style="left:2398px;top:1378px;width:129px;height:36px;background:#1f1f1f"></div>
<div class="t" style="left:2405px;top:1384px;font-size:11px;font-weight:bold;color:#dcdcdc">Checking for Updates</div>
<div class="a" style="left:2405px;top:1399px;width:114px;height:9px;background:#99c86a"></div>
<div class="a" style="left:2532px;top:1386px;width:26px;height:26px;background:#5f5c1c;border:1px solid #7d7a3c"></div>
<svg class="a" style="left:2538px;top:1393px" width="12" height="12" viewBox="0 0 12 12"><path d="M1 1l10 10M11 1L1 11" stroke="#f0f0f0" stroke-width="1.2"/></svg>

<!-- ============ STATUS BAR ============ -->
<div class="a dk" style="left:38px;top:1414px;width:2522px;height:25px"></div>
<svg class="a" style="left:47px;top:1421px" width="13" height="13" viewBox="0 0 13 13"><rect x="0.5" y="0.5" width="12" height="12" fill="none" stroke="#8a8a8a"/><rect x="1" y="1" width="4" height="11" fill="#8a8a8a"/></svg>
<div class="a" style="left:77px;top:1416px;width:203px;height:22px;background:#262626"></div>
<svg class="a" style="left:83px;top:1420px" width="16" height="16" viewBox="0 0 16 16"><circle cx="9.5" cy="6" r="4.3" fill="none" stroke="#9a9a9a" stroke-width="1.2"/><path d="M6.5 9L1.5 14" stroke="#9a9a9a" stroke-width="1.4"/><path d="M11 12.5l1.5 1.5 1.5-1.5" fill="none" stroke="#9a9a9a"/></svg>
<div class="t" style="left:103px;top:1421px;font-size:13px;color:#8c8c8c">Type to locate (⌘K)</div>
<div class="a" style="left:281px;top:1416px;width:1px;height:22px;background:#3a3a3a"></div>
<div class="t" style="left:289px;top:1421px;font-size:13px;color:#e0e0e0">1  Issues</div>
<div class="t" style="left:357px;top:1421px;font-size:13px;color:#e0e0e0">2  Search Results</div>
<div class="t" style="left:477px;top:1421px;font-size:13px;color:#e0e0e0">3  Application Output</div>
<div class="t" style="left:621px;top:1421px;font-size:13px;color:#e0e0e0">5  QML Debugger Console</div>
<div class="t" style="left:796px;top:1421px;font-size:13px;color:#e0e0e0">6  General Messages</div>
<svg class="a" style="left:941px;top:1421px" width="9" height="13" viewBox="0 0 9 13"><path d="M0.5 5.5 L4.5 1 L8.5 5.5Z M0.5 7.5 L4.5 12 L8.5 7.5Z" fill="#bdbdbd"/></svg>
<div class="a" style="left:2499px;top:1416px;width:30px;height:23px;background:#111"></div>
<svg class="a" style="left:2505px;top:1420px" width="18" height="14" viewBox="0 0 18 14"><rect x="1" y="7" width="15" height="5" rx="1.5" fill="none" stroke="#bdbdbd" stroke-width="1.2"/><rect x="9" y="8" width="6" height="3" fill="#bdbdbd"/><path d="M11 4l2-2.5 2 2.5z" fill="#bdbdbd"/></svg>
<svg class="a" style="left:2540px;top:1421px" width="14" height="14" viewBox="0 0 14 14"><rect x="0.5" y="0.5" width="13" height="13" fill="none" stroke="#9a9a9a"/><rect x="7" y="1" width="6" height="12" fill="#9a9a9a"/></svg>
</body></html>
